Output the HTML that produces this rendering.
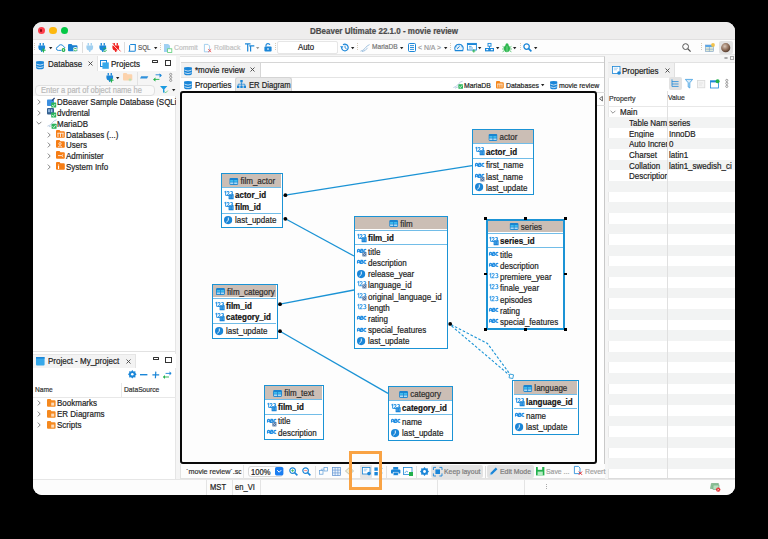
<!DOCTYPE html><html><head><meta charset="utf-8"><style>
html,body{margin:0;padding:0;}
body{width:768px;height:539px;background:#000;position:relative;overflow:hidden;font-family:"Liberation Sans", sans-serif;}
.r{position:absolute;box-sizing:border-box;}
.t{position:absolute;white-space:nowrap;line-height:1.2;-webkit-text-stroke:0.2px currentColor;}
svg.r{display:block;}
</style></head><body>
<div class="r" style="left:33.00px;top:22.00px;width:702.00px;height:473.20px;background:#ececec;border-radius:9px;overflow:hidden;"></div>
<div class="r" style="left:33.00px;top:22.00px;width:702.00px;height:17.50px;background:#eeeded;border-radius:9px 9px 0 0;"></div>
<div class="r" style="left:37.60px;top:26.80px;width:7.4px;height:7.4px;border-radius:50%;background:#fe3e4b;"></div>
<div class="r" style="left:49.40px;top:26.80px;width:7.4px;height:7.4px;border-radius:50%;background:#fdb80f;"></div>
<div class="r" style="left:61.10px;top:26.80px;width:7.4px;height:7.4px;border-radius:50%;background:#04c845;"></div>
<div class="r" style="left:40.1px;top:29.3px;width:2.4px;height:2.4px;border-radius:50%;background:#8a0a10;"></div>
<div class="t" style="left:310.00px;top:25.62px;font-size:8.80px;color:#4b4b4b;font-weight:bold;transform:scaleX(0.9091);transform-origin:0 50%;">DBeaver Ultimate 22.1.0 - movie review</div>
<div class="r" style="left:33.00px;top:39.30px;width:702.00px;height:15.50px;background:#fdfdfd;border-top:0.8px solid #e0dfdf;border-bottom:0.8px solid #e6e6e6;"></div>
<svg class="r" style="left:34.00px;top:43.00px;overflow:visible" width="1" height="9" viewBox="0 0 1 9"><rect x="0" y="0" width="1" height="1" fill="#d6cbb8"/><rect x="0" y="2" width="1" height="1" fill="#d6cbb8"/><rect x="0" y="4" width="1" height="1" fill="#d6cbb8"/><rect x="0" y="6" width="1" height="1" fill="#d6cbb8"/></svg>
<svg class="r" style="left:37.90px;top:42.60px;overflow:visible" width="9" height="10" viewBox="0 0 9 10"><rect x="1.6" y="0" width="1.3" height="2.6" fill="#1a86d8"/><rect x="4.6" y="0" width="1.3" height="2.6" fill="#1a86d8"/><path d="M0.4 2.4H7.1V5.1Q7.1 7.3 4.4 7.7V9H3.1V7.7Q0.4 7.3 0.4 5.1Z" fill="#1a86d8"/><path d="M5.5 5.2V9.4M3.4 7.3H7.6" stroke="#22b14c" stroke-width="1.1"/></svg>
<svg class="r" style="left:48.60px;top:46.50px;overflow:visible" width="3.4" height="2.4" viewBox="0 0 3.4 2.4"><path d="M0 0H3.4L1.7 2.3Z" fill="#222"/></svg>
<svg class="r" style="left:55.50px;top:44.00px;overflow:visible" width="10" height="8" viewBox="0 0 10 8"><path d="M5.4 6.4H2.3A1.8 1.8 0 0 1 2.1 2.8A2.9 2.9 0 0 1 7.6 2.6A1.9 1.9 0 0 1 9 4" stroke="#1a86d8" stroke-width="0.95" fill="none"/><circle cx="7.5" cy="6" r="1.9" fill="#22b14c"/><circle cx="7.5" cy="6" r="0.7" fill="#fff"/></svg>
<svg class="r" style="left:68.20px;top:43.60px;overflow:visible" width="9.5" height="7.2" viewBox="0 0 9.5 7.2"><path d="M0 1Q0 0 1 0H3.5L4.5 1.2H8.5Q9.5 1.2 9.5 2.2V6.4Q9.5 7.2 8.5 7.2H1Q0 7.2 0 6.2Z" fill="#1a7fd0"/><circle cx="7.3" cy="5.4" r="2.3" fill="#f8f8f8"/><path d="M5.6 5.6Q6.2 3.8 8.6 4.6M5.8 6.4Q7.2 7.6 9 6" stroke="#22b14c" stroke-width="0.8" fill="none"/></svg>
<div class="r" style="left:81.8px;top:42px;width:0.8px;height:11px;background:#dddddd"></div>
<svg class="r" style="left:85.60px;top:42.60px;overflow:visible" width="9" height="10" viewBox="0 0 9 10"><rect x="1.6" y="0" width="1.3" height="2.6" fill="#9fcff0"/><rect x="4.6" y="0" width="1.3" height="2.6" fill="#9fcff0"/><path d="M0.4 2.4H7.1V5.1Q7.1 7.3 4.4 7.7V9H3.1V7.7Q0.4 7.3 0.4 5.1Z" fill="#9fcff0"/></svg>
<svg class="r" style="left:99.20px;top:42.60px;overflow:visible" width="9" height="10" viewBox="0 0 9 10"><rect x="1.6" y="0" width="1.3" height="2.6" fill="#1a86d8"/><rect x="4.6" y="0" width="1.3" height="2.6" fill="#1a86d8"/><path d="M0.4 2.4H7.1V5.1Q7.1 7.3 4.4 7.7V9H3.1V7.7Q0.4 7.3 0.4 5.1Z" fill="#1a86d8"/><path d="M4.2 6.3Q5.2 4.8 7.3 5.3M4.6 8.2Q6.3 8.9 7.6 7.3" stroke="#22b14c" stroke-width="1" fill="none"/></svg>
<svg class="r" style="left:111.80px;top:42.60px;overflow:visible" width="9" height="10" viewBox="0 0 9 10"><rect x="1.6" y="0" width="1.3" height="2.6" fill="#f0201e"/><rect x="4.6" y="0" width="1.3" height="2.6" fill="#f0201e"/><path d="M0.4 2.4H7.1V5.1Q7.1 7.3 4.4 7.7V9H3.1V7.7Q0.4 7.3 0.4 5.1Z" fill="#f0201e"/><path d="M0 0.8L8 9" stroke="#fff" stroke-width="0.8"/><path d="M0.6 0L8.6 8.4" stroke="#f0201e" stroke-width="0.8"/></svg>
<div class="r" style="left:124px;top:42px;width:0.8px;height:11px;background:#dddddd"></div>
<svg class="r" style="left:128.10px;top:43.60px;overflow:visible" width="8" height="8" viewBox="0 0 8 8"><path d="M2.2 0.5H7.3V1.8M7.3 0.5V6.2Q7.3 7.3 6.2 7.3H0.5Q1.6 7.3 1.6 6.2V1.2" stroke="#1a86d8" stroke-width="1.1" fill="none"/></svg>
<div class="t" style="left:138.00px;top:42.85px;font-size:7.59px;color:#555;font-weight:normal;transform:scaleX(0.82);transform-origin:0 50%;">SQL</div>
<svg class="r" style="left:153.70px;top:46.50px;overflow:visible" width="3.4" height="2.4" viewBox="0 0 3.4 2.4"><path d="M0 0H3.4L1.7 2.3Z" fill="#222"/></svg>
<svg class="r" style="left:159.90px;top:43.00px;overflow:visible" width="1" height="9" viewBox="0 0 1 9"><rect x="0" y="0" width="1" height="1" fill="#d6cbb8"/><rect x="0" y="2" width="1" height="1" fill="#d6cbb8"/><rect x="0" y="4" width="1" height="1" fill="#d6cbb8"/><rect x="0" y="6" width="1" height="1" fill="#d6cbb8"/></svg>
<svg class="r" style="left:164.00px;top:43.60px;overflow:visible" width="8" height="8.5" viewBox="0 0 8 8.5"><path d="M0 0H4.2L6 1.8V8H0Z" fill="#9fd0f2"/><rect x="3.6" y="4.8" width="4.2" height="3.6" fill="#fff" stroke="#5ccf77" stroke-width="0.8"/></svg>
<div class="t" style="left:174.00px;top:42.85px;font-size:7.59px;color:#c2c2c2;font-weight:normal;transform:scaleX(0.9091);transform-origin:0 50%;">Commit</div>
<svg class="r" style="left:204.20px;top:43.60px;overflow:visible" width="8" height="8.5" viewBox="0 0 8 8.5"><path d="M0.4 0.4H4L5.6 2V7.8H0.4Z" stroke="#8fc4ea" stroke-width="0.8" fill="none"/><path d="M4.2 5.2L7.2 8M7.2 5.2L4.2 8" stroke="#f05252" stroke-width="0.9"/></svg>
<div class="t" style="left:213.50px;top:42.85px;font-size:7.59px;color:#c2c2c2;font-weight:normal;transform:scaleX(0.9091);transform-origin:0 50%;">Rollback</div>
<svg class="r" style="left:245.30px;top:43.30px;overflow:visible" width="10" height="9" viewBox="0 0 10 9"><path d="M0 0.8H5.5M2.7 0.8V8.6M4.2 2.8H9.3M5.6 2.8V8.6" stroke="#1a86d8" stroke-width="1.2" fill="none"/></svg>
<svg class="r" style="left:255.60px;top:46.50px;overflow:visible" width="3.4" height="2.4" viewBox="0 0 3.4 2.4"><path d="M0 0H3.4L1.7 2.3Z" fill="#999"/></svg>
<svg class="r" style="left:263.70px;top:43.00px;overflow:visible" width="8" height="8.5" viewBox="0 0 8 8.5"><path d="M2 3.6V2.4Q2 0.6 4 0.6Q5.5 0.6 5.9 1.8" stroke="#1a86d8" stroke-width="1.1" fill="none"/><rect x="0.4" y="3.6" width="7.2" height="4.8" rx="1" fill="#1a86d8"/><rect x="3.5" y="5" width="1" height="2" fill="#fff"/></svg>
<svg class="r" style="left:274.80px;top:43.00px;overflow:visible" width="1" height="9" viewBox="0 0 1 9"><rect x="0" y="0" width="1" height="1" fill="#d6cbb8"/><rect x="0" y="2" width="1" height="1" fill="#d6cbb8"/><rect x="0" y="4" width="1" height="1" fill="#d6cbb8"/><rect x="0" y="6" width="1" height="1" fill="#d6cbb8"/></svg>
<div class="r" style="left:277.30px;top:41.00px;width:60.40px;height:12.60px;background:#fff;border:0.8px solid #e6e6e6;border-radius:2px;"></div>
<div class="t" style="left:298.10px;top:42.25px;font-size:8.58px;color:#222;font-weight:normal;transform:scaleX(0.9091);transform-origin:0 50%;">Auto</div>
<svg class="r" style="left:339.50px;top:43.30px;overflow:visible" width="9" height="9" viewBox="0 0 9 9"><path d="M1.6 4.6A3.3 3.3 0 1 0 3 1.8" stroke="#1a86d8" stroke-width="1.2" fill="none"/><path d="M0 3.2L1.8 5.4L3.4 3.2Z" fill="#1a86d8"/><path d="M5 2.6V4.8L6.6 5.8" stroke="#1a86d8" stroke-width="0.9" fill="none"/></svg>
<svg class="r" style="left:350.60px;top:46.50px;overflow:visible" width="3.4" height="2.4" viewBox="0 0 3.4 2.4"><path d="M0 0H3.4L1.7 2.3Z" fill="#222"/></svg>
<svg class="r" style="left:357.00px;top:43.00px;overflow:visible" width="1" height="9" viewBox="0 0 1 9"><rect x="0" y="0" width="1" height="1" fill="#d6cbb8"/><rect x="0" y="2" width="1" height="1" fill="#d6cbb8"/><rect x="0" y="4" width="1" height="1" fill="#d6cbb8"/><rect x="0" y="6" width="1" height="1" fill="#d6cbb8"/></svg>
<svg class="r" style="left:360.00px;top:43.60px;overflow:visible" width="10" height="8" viewBox="0 0 10 8"><path d="M0.5 7.2Q3 6.8 5 4.4Q7 1.4 9.6 0.6M2 7.6Q5.6 7.2 7.6 3.8" stroke="#8bb4d8" stroke-width="0.8" fill="none"/></svg>
<div class="t" style="left:371.70px;top:43.04px;font-size:7.26px;color:#777;font-weight:normal;transform:scaleX(0.9091);transform-origin:0 50%;">MariaDB</div>
<svg class="r" style="left:400.30px;top:46.50px;overflow:visible" width="3.4" height="2.4" viewBox="0 0 3.4 2.4"><path d="M0 0H3.4L1.7 2.3Z" fill="#222"/></svg>
<svg class="r" style="left:408.00px;top:43.20px;overflow:visible" width="8" height="9" viewBox="0 0 8 9"><rect x="0.5" y="0.5" width="7" height="8" rx="1" stroke="#1a86d8" stroke-width="1" fill="none"/><path d="M2 2.6H6M2 4.5H6M2 6.4H6" stroke="#1a86d8" stroke-width="0.9"/></svg>
<div class="t" style="left:417.90px;top:42.85px;font-size:7.59px;color:#999;font-weight:normal;transform:scaleX(0.9091);transform-origin:0 50%;">&lt; N/A &gt;</div>
<svg class="r" style="left:444.10px;top:46.50px;overflow:visible" width="3.4" height="2.4" viewBox="0 0 3.4 2.4"><path d="M0 0H3.4L1.7 2.3Z" fill="#222"/></svg>
<svg class="r" style="left:450.40px;top:43.00px;overflow:visible" width="1" height="9" viewBox="0 0 1 9"><rect x="0" y="0" width="1" height="1" fill="#d6cbb8"/><rect x="0" y="2" width="1" height="1" fill="#d6cbb8"/><rect x="0" y="4" width="1" height="1" fill="#d6cbb8"/><rect x="0" y="6" width="1" height="1" fill="#d6cbb8"/></svg>
<svg class="r" style="left:454.20px;top:43.40px;overflow:visible" width="10" height="8.4" viewBox="0 0 10 8.4"><path d="M1.2 7.6A4.3 4.3 0 1 1 8.8 7.6Z" stroke="#1a86d8" stroke-width="1.1" fill="#eaf4fc"/><path d="M3 5.8L5.6 3.4" stroke="#1a86d8" stroke-width="1"/><path d="M2.2 3.6L2.8 4M5 1.8V2.6M7.8 3.6L7.2 4" stroke="#1a86d8" stroke-width="0.7"/></svg>
<svg class="r" style="left:466.50px;top:43.00px;overflow:visible" width="10" height="9.5" viewBox="0 0 10 9.5"><rect x="0.4" y="0.4" width="9" height="6.6" stroke="#1a86d8" stroke-width="0.9" fill="#fff"/><rect x="0.4" y="0.4" width="9" height="1.6" fill="#1a86d8"/><path d="M2 3.4H4.6M2 5H6" stroke="#1a86d8" stroke-width="0.7"/><path d="M6.8 6.4V9.6M5.2 8H8.4" stroke="#22b14c" stroke-width="0.9"/></svg>
<svg class="r" style="left:477.90px;top:46.50px;overflow:visible" width="3.4" height="2.4" viewBox="0 0 3.4 2.4"><path d="M0 0H3.4L1.7 2.3Z" fill="#222"/></svg>
<svg class="r" style="left:484.50px;top:43.30px;overflow:visible" width="9" height="8.5" viewBox="0 0 9 8.5"><rect x="3" y="0.4" width="3" height="2.8" stroke="#1a86d8" stroke-width="0.9" fill="none"/><path d="M4.5 3.2V5" stroke="#1a86d8" stroke-width="0.9"/><rect x="0" y="5" width="9" height="3.4" fill="#1a86d8"/><rect x="1.2" y="6" width="2" height="1.2" fill="#fff"/><rect x="5.8" y="6" width="2" height="1.2" fill="#fff"/></svg>
<svg class="r" style="left:495.80px;top:46.50px;overflow:visible" width="3.4" height="2.4" viewBox="0 0 3.4 2.4"><path d="M0 0H3.4L1.7 2.3Z" fill="#222"/></svg>
<svg class="r" style="left:502.00px;top:43.00px;overflow:visible" width="10" height="9.5" viewBox="0 0 10 9.5"><ellipse cx="5" cy="5.6" rx="3.1" ry="3.6" fill="#2eb84f"/><circle cx="5" cy="1.8" r="1.5" fill="#2eb84f"/><path d="M0.6 3.4L2 4.4M9.4 3.4L8 4.4M0.2 6H1.9M9.8 6H8.1M0.6 8.8L2 7.8M9.4 8.8L8 7.8" stroke="#2eb84f" stroke-width="0.8"/><path d="M5 3.2V9" stroke="#c8efd1" stroke-width="0.5"/></svg>
<svg class="r" style="left:513.30px;top:46.50px;overflow:visible" width="3.4" height="2.4" viewBox="0 0 3.4 2.4"><path d="M0 0H3.4L1.7 2.3Z" fill="#222"/></svg>
<svg class="r" style="left:519.60px;top:43.00px;overflow:visible" width="1" height="9" viewBox="0 0 1 9"><rect x="0" y="0" width="1" height="1" fill="#d6cbb8"/><rect x="0" y="2" width="1" height="1" fill="#d6cbb8"/><rect x="0" y="4" width="1" height="1" fill="#d6cbb8"/><rect x="0" y="6" width="1" height="1" fill="#d6cbb8"/></svg>
<svg class="r" style="left:523.20px;top:43.20px;overflow:visible" width="9" height="9" viewBox="0 0 9 9"><circle cx="3.6" cy="3.6" r="2.7" stroke="#1a86d8" stroke-width="1.3" fill="none"/><path d="M5.6 5.6L8.4 8.4" stroke="#1a86d8" stroke-width="1.6"/></svg>
<svg class="r" style="left:534.10px;top:46.50px;overflow:visible" width="3.4" height="2.4" viewBox="0 0 3.4 2.4"><path d="M0 0H3.4L1.7 2.3Z" fill="#222"/></svg>
<svg class="r" style="left:682.20px;top:42.50px;overflow:visible" width="9" height="9" viewBox="0 0 9 9"><circle cx="3.6" cy="3.6" r="2.9" stroke="#555" stroke-width="1" fill="none"/><path d="M5.8 5.8L8.6 8.6" stroke="#555" stroke-width="1.3"/></svg>
<svg class="r" style="left:701.00px;top:43.00px;overflow:visible" width="1" height="9" viewBox="0 0 1 9"><rect x="0" y="0" width="1" height="1" fill="#d6cbb8"/><rect x="0" y="2" width="1" height="1" fill="#d6cbb8"/><rect x="0" y="4" width="1" height="1" fill="#d6cbb8"/><rect x="0" y="6" width="1" height="1" fill="#d6cbb8"/></svg>
<svg class="r" style="left:704.70px;top:42.60px;overflow:visible" width="10" height="9" viewBox="0 0 10 9"><rect x="0.4" y="2" width="8" height="6.6" fill="#dfe9d8" stroke="#7aa0c8" stroke-width="0.6"/><rect x="0.4" y="2" width="8" height="2" fill="#5aa6e8"/><path d="M4.4 4V8.6M0.4 6.2H8.4" stroke="#7aa0c8" stroke-width="0.6"/><circle cx="8" cy="2" r="1.9" fill="#f3c24a"/></svg>
<div class="r" style="left:719.40px;top:40.70px;width:13.60px;height:13.00px;background:#e3e3e3;border-radius:2px;"></div>
<svg class="r" style="left:721.40px;top:42.60px;overflow:visible" width="9.4" height="9.4" viewBox="0 0 9.4 9.4"><defs><radialGradient id="av" cx="0.4" cy="0.35" r="0.7"><stop offset="0" stop-color="#d8c6b8"/><stop offset="0.6" stop-color="#8b6a55"/><stop offset="1" stop-color="#4a3426"/></radialGradient></defs><circle cx="4.7" cy="4.7" r="4.6" fill="url(#av)"/></svg>
<div class="r" style="left:33.00px;top:54.80px;width:702.00px;height:424.70px;background:#f5f5f5;"></div>
<div class="r" style="left:33.00px;top:55.60px;width:143.40px;height:295.40px;background:#fff;border-top:0.8px solid #e2e2e2;border-right:0.6px solid #e6e6e6;"></div>
<div class="r" style="left:33.00px;top:56.40px;width:143.00px;height:40.10px;background:#f5f5f5;"></div>
<div class="r" style="left:96.80px;top:56.00px;width:79.20px;height:14.80px;background:#fff;border-left:0.8px solid #e4e4e4;"></div>
<svg class="r" style="left:36.30px;top:59.70px;overflow:visible" width="8" height="9" viewBox="0 0 8 9"><ellipse cx="4.0" cy="2.5999999999999996" rx="3.8" ry="1.5" fill="#1a86d8"/><ellipse cx="4.0" cy="5.2" rx="3.8" ry="1.5" fill="#1a86d8"/><ellipse cx="4.0" cy="7.8" rx="3.8" ry="1.5" fill="#1a86d8"/><path d="M0.2 1.5V7.4Q4.0 9.8 7.8 7.4V1.5" fill="#1a86d8"/><path d="M0.6 4.2Q4.0 6 7.4 4.2M0.6 6.8Q4.0 8.6 7.4 6.8" stroke="#fff" stroke-width="0.7" fill="none"/></svg>
<div class="t" style="left:48.10px;top:58.92px;font-size:8.80px;color:#222;font-weight:normal;transform:scaleX(0.9091);transform-origin:0 50%;">Database</div>
<svg class="r" style="left:87.60px;top:61.40px;overflow:visible" width="5" height="5" viewBox="0 0 5 5"><path d="M0.5 0.5L4.5 4.5M4.5 0.5L0.5 4.5" stroke="#444" stroke-width="0.9"/></svg>
<svg class="r" style="left:100.20px;top:59.50px;overflow:visible" width="9" height="9" viewBox="0 0 9 9"><rect x="0.5" y="0.5" width="6" height="6" stroke="#1a86d8" stroke-width="1" fill="#fff"/><rect x="2.4" y="2.4" width="6.4" height="6.4" fill="#36a8ea"/></svg>
<div class="t" style="left:110.80px;top:58.92px;font-size:8.80px;color:#222;font-weight:normal;transform:scaleX(0.9091);transform-origin:0 50%;">Projects</div>
<div class="r" style="left:151.80px;top:60.30px;width:6.40px;height:2.50px;border:0.9px solid #333;border-radius:0.5px;"></div>
<div class="r" style="left:165.00px;top:60.00px;width:6.20px;height:6.20px;border:0.9px solid #333;border-top:1.8px solid #333;"></div>
<svg class="r" style="left:105.50px;top:72.60px;overflow:visible" width="9" height="10" viewBox="0 0 9 10"><rect x="1.6" y="0" width="1.3" height="2.6" fill="#1a86d8"/><rect x="4.6" y="0" width="1.3" height="2.6" fill="#1a86d8"/><path d="M0.4 2.4H7.1V5.1Q7.1 7.3 4.4 7.7V9H3.1V7.7Q0.4 7.3 0.4 5.1Z" fill="#1a86d8"/><path d="M5.5 5.2V9.4M3.4 7.3H7.6" stroke="#22b14c" stroke-width="1.1"/></svg>
<svg class="r" style="left:116.00px;top:76.60px;overflow:visible" width="3.4" height="2.4" viewBox="0 0 3.4 2.4"><path d="M0 0H3.4L1.7 2.3Z" fill="#222"/></svg>
<svg class="r" style="left:122.70px;top:73.00px;overflow:visible" width="9.3" height="7.6" viewBox="0 0 9.3 7.6"><path d="M0 1Q0 0 1 0H3.5L4.5 1.2H8.3Q9.3 1.2 9.3 2.2V6.8Q9.3 7.6 8.3 7.6H1Q0 7.6 0 6.6Z" fill="#fcd3ad"/><path d="M7 5.4V8.2M5.6 6.8H8.4" stroke="#a6e3b5" stroke-width="0.8"/></svg>
<div class="r" style="left:136.5px;top:71.5px;width:0.8px;height:13.0px;background:#e2e2e2"></div>
<svg class="r" style="left:140.40px;top:76.00px;overflow:visible" width="8.5" height="3" viewBox="0 0 8.5 3"><path d="M1.2 0.3H8.3L7 2.6H0Z" fill="#1a86d8" opacity="0.9"/></svg>
<svg class="r" style="left:152.50px;top:73.80px;overflow:visible" width="9" height="7" viewBox="0 0 9 7"><path d="M2.6 0.8H8.2M6.6 0L8.4 1.6L6.6 3" stroke="#1a86d8" stroke-width="0.9" fill="#1a86d8"/><path d="M0.8 5.4H6.4M2.4 4L0.6 5.6L2.4 7" stroke="#22b14c" stroke-width="0.9" fill="#22b14c"/></svg>
<svg class="r" style="left:169.00px;top:73.00px;overflow:visible" width="3.5" height="9" viewBox="0 0 3.5 9"><circle cx="1.7" cy="1.4" r="1.1" stroke="#666" stroke-width="0.6" fill="none"/><circle cx="1.7" cy="4.4" r="1.1" stroke="#666" stroke-width="0.6" fill="none"/><circle cx="1.7" cy="7.4" r="1.1" stroke="#666" stroke-width="0.6" fill="none"/></svg>
<div class="r" style="left:34.50px;top:85.20px;width:120.80px;height:10.60px;background:#fafafa;border:0.8px solid #e0e0e0;border-radius:4px;"></div>
<div class="t" style="left:40.80px;top:86.25px;font-size:8.25px;color:#b9b9b9;font-weight:normal;transform:scaleX(0.9091);transform-origin:0 50%;">Enter a part of object name he</div>
<svg class="r" style="left:160.30px;top:86.30px;overflow:visible" width="8" height="7.4" viewBox="0 0 8 7.4"><path d="M0 0H7.4L4.4 3.2V7.2L3 6.2V3.2Z" fill="#1a9ae0"/><path d="M4.6 5.6L5.8 6.8L7.8 4.6" stroke="#3cc05c" stroke-width="0.7" fill="none"/></svg>
<svg class="r" style="left:171.70px;top:88.90px;overflow:visible" width="3.4" height="2.4" viewBox="0 0 3.4 2.4"><path d="M0 0H3.4L1.7 2.3Z" fill="#222"/></svg>
<svg class="r" style="left:37.20px;top:99.30px;overflow:visible" width="4" height="6" viewBox="0 0 4 6"><path d="M0.8 0.6L3.2 3L0.8 5.4" stroke="#777" stroke-width="0.9" fill="none"/></svg>
<svg class="r" style="left:37.20px;top:110.00px;overflow:visible" width="4" height="6" viewBox="0 0 4 6"><path d="M0.8 0.6L3.2 3L0.8 5.4" stroke="#777" stroke-width="0.9" fill="none"/></svg>
<svg class="r" style="left:36.20px;top:121.40px;overflow:visible" width="6" height="4" viewBox="0 0 6 4"><path d="M0.6 0.8L3 3.2L5.4 0.8" stroke="#777" stroke-width="0.9" fill="none"/></svg>
<svg class="r" style="left:47.20px;top:97.60px;overflow:visible" width="10" height="10" viewBox="0 0 10 10"><rect x="0" y="1.6" width="7" height="6.4" rx="0.8" fill="#3b8fe0"/><path d="M5 2.6L7.6 0" stroke="#1d3f74" stroke-width="1.2"/><rect x="4.2" y="4.6" width="5" height="5" rx="0.5" fill="#2cb45a"/><path d="M5.2 7.2L6.4 8.4L8.2 6" stroke="#fff" stroke-width="0.8" fill="none"/></svg>
<div class="t" style="left:56.7px;top:97.32px;width:131.23px;overflow:hidden;font-size:8.80px;color:#1e1e1e;transform:scaleX(0.9091);transform-origin:0 50%;">DBeaver Sample Database (SQLite)</div>
<svg class="r" style="left:47.20px;top:108.30px;overflow:visible" width="10" height="10" viewBox="0 0 10 10"><rect x="0" y="0" width="7" height="6.6" rx="1" fill="#34608f"/><rect x="1.2" y="1.2" width="1.6" height="3" fill="#9ec3ea"/><rect x="3.8" y="1.2" width="1.6" height="3" fill="#9ec3ea"/><rect x="4.2" y="4.6" width="5" height="5" rx="0.5" fill="#2cb45a"/><path d="M5.2 7.2L6.4 8.4L8.2 6" stroke="#fff" stroke-width="0.8" fill="none"/></svg>
<div class="t" style="left:56.70px;top:108.32px;font-size:8.80px;color:#1e1e1e;font-weight:normal;transform:scaleX(0.9091);transform-origin:0 50%;">dvdrental</div>
<svg class="r" style="left:46.60px;top:118.60px;overflow:visible" width="10.4" height="10" viewBox="0 0 10.4 10"><path d="M0.4 7.2Q3.6 6.6 5.6 3.4Q7 1.4 9.6 0.8M2 7.8Q5 7.2 6.8 4.6" stroke="#a0bcd8" stroke-width="0.7" fill="none"/><rect x="4.6" y="4.8" width="5" height="5" rx="0.5" fill="#2cb45a"/><path d="M5.6 7.4L6.8 8.6L8.6 6.2" stroke="#fff" stroke-width="0.8" fill="none"/></svg>
<div class="t" style="left:56.70px;top:119.02px;font-size:8.80px;color:#1e1e1e;font-weight:normal;transform:scaleX(0.9091);transform-origin:0 50%;">MariaDB</div>
<svg class="r" style="left:47.30px;top:131.70px;overflow:visible" width="4" height="6" viewBox="0 0 4 6"><path d="M0.8 0.6L3.2 3L0.8 5.4" stroke="#777" stroke-width="0.9" fill="none"/></svg>
<svg class="r" style="left:56.10px;top:129.80px;overflow:visible" width="8.8" height="7.8" viewBox="0 0 8.8 7.8"><path d="M0 1Q0 0 1 0H3.5L4.5 1.2H7.800000000000001Q8.8 1.2 8.8 2.2V7.0Q8.8 7.8 7.800000000000001 7.8H1Q0 7.8 0 6.8Z" fill="#f67d14"/><path d="M2 3.2V7M4.5 3.2V7M7 3.2V7" stroke="#fff" stroke-width="0.8"/><path d="M1.4 3.2H7.6" stroke="#fff" stroke-width="0.8"/></svg>
<div class="t" style="left:65.50px;top:129.72px;font-size:8.80px;color:#1e1e1e;font-weight:normal;transform:scaleX(0.9091);transform-origin:0 50%;">Databases (...)</div>
<svg class="r" style="left:47.30px;top:142.30px;overflow:visible" width="4" height="6" viewBox="0 0 4 6"><path d="M0.8 0.6L3.2 3L0.8 5.4" stroke="#777" stroke-width="0.9" fill="none"/></svg>
<svg class="r" style="left:56.10px;top:140.40px;overflow:visible" width="8.8" height="7.8" viewBox="0 0 8.8 7.8"><path d="M0 1Q0 0 1 0H3.5L4.5 1.2H7.800000000000001Q8.8 1.2 8.8 2.2V7.0Q8.8 7.8 7.800000000000001 7.8H1Q0 7.8 0 6.8Z" fill="#f67d14"/><circle cx="4" cy="3.8" r="1.2" stroke="#fff" stroke-width="0.7" fill="none"/><path d="M2 7Q4 4.6 6 7" stroke="#fff" stroke-width="0.7" fill="none"/></svg>
<div class="t" style="left:65.50px;top:140.32px;font-size:8.80px;color:#1e1e1e;font-weight:normal;transform:scaleX(0.9091);transform-origin:0 50%;">Users</div>
<svg class="r" style="left:47.30px;top:152.90px;overflow:visible" width="4" height="6" viewBox="0 0 4 6"><path d="M0.8 0.6L3.2 3L0.8 5.4" stroke="#777" stroke-width="0.9" fill="none"/></svg>
<svg class="r" style="left:56.10px;top:151.00px;overflow:visible" width="8.8" height="7.8" viewBox="0 0 8.8 7.8"><path d="M0 1Q0 0 1 0H3.5L4.5 1.2H7.800000000000001Q8.8 1.2 8.8 2.2V7.0Q8.8 7.8 7.800000000000001 7.8H1Q0 7.8 0 6.8Z" fill="#f67d14"/><path d="M2 4.6H5.6M5.6 4.6L7.2 3.4M5.6 4.6L7.2 5.8" stroke="#fff" stroke-width="0.8" fill="none"/></svg>
<div class="t" style="left:65.50px;top:150.92px;font-size:8.80px;color:#1e1e1e;font-weight:normal;transform:scaleX(0.9091);transform-origin:0 50%;">Administer</div>
<svg class="r" style="left:47.30px;top:163.50px;overflow:visible" width="4" height="6" viewBox="0 0 4 6"><path d="M0.8 0.6L3.2 3L0.8 5.4" stroke="#777" stroke-width="0.9" fill="none"/></svg>
<svg class="r" style="left:56.10px;top:161.60px;overflow:visible" width="8.8" height="7.8" viewBox="0 0 8.8 7.8"><path d="M0 1Q0 0 1 0H3.5L4.5 1.2H7.800000000000001Q8.8 1.2 8.8 2.2V7.0Q8.8 7.8 7.800000000000001 7.8H1Q0 7.8 0 6.8Z" fill="#f67d14"/><rect x="2" y="2.6" width="1.1" height="0.9" fill="#fff"/><rect x="2" y="4" width="1.1" height="3" fill="#fff"/></svg>
<div class="t" style="left:65.50px;top:161.52px;font-size:8.80px;color:#1e1e1e;font-weight:normal;transform:scaleX(0.9091);transform-origin:0 50%;">System Info</div>
<div class="r" style="left:33.00px;top:350.80px;width:143.40px;height:128.70px;background:#fff;border-top:0.8px solid #e2e2e2;border-right:0.6px solid #e6e6e6;"></div>
<div class="r" style="left:33.00px;top:353.80px;width:143.00px;height:14.40px;background:#f3f3f3;border-top:0.8px solid #e6e6e6;"></div>
<div class="r" style="left:134.60px;top:354.20px;width:41.40px;height:13.80px;background:#fff;border-left:0.8px solid #e4e4e4;"></div>
<svg class="r" style="left:36.20px;top:356.50px;overflow:visible" width="8.6" height="8.4" viewBox="0 0 8.6 8.4"><rect x="0" y="0" width="8.6" height="8.4" rx="1" fill="#36a8ea"/><rect x="0" y="0" width="8.6" height="1.6" fill="#1a86d8"/></svg>
<div class="t" style="left:47.70px;top:356.32px;font-size:8.80px;color:#222;font-weight:normal;transform:scaleX(0.9091);transform-origin:0 50%;">Project - My_project</div>
<svg class="r" style="left:125.60px;top:358.60px;overflow:visible" width="5" height="5" viewBox="0 0 5 5"><path d="M0.5 0.5L4.5 4.5M4.5 0.5L0.5 4.5" stroke="#444" stroke-width="0.9"/></svg>
<div class="r" style="left:152.60px;top:357.40px;width:6.20px;height:2.20px;border:0.9px solid #333;border-radius:0.5px;"></div>
<div class="r" style="left:165.40px;top:357.20px;width:6.20px;height:6.20px;border:0.9px solid #333;border-top:1.8px solid #333;"></div>
<svg class="r" style="left:127.80px;top:370.20px;overflow:visible" width="8.6" height="8.6" viewBox="0 0 8.6 8.6"><path d="M4.3 0L5.5 1.4L7.4 1.2L7.4 3.1L8.6 4.3L7.4 5.5L7.4 7.4L5.5 7.2L4.3 8.6L3.1 7.2L1.2 7.4L1.2 5.5L0 4.3L1.2 3.1L1.2 1.2L3.1 1.4Z" fill="#1a86d8"/><circle cx="4.3" cy="4.3" r="1.3" fill="#fff"/></svg>
<svg class="r" style="left:139.80px;top:373.60px;overflow:visible" width="7.4" height="2" viewBox="0 0 7.4 2"><rect x="0" y="0" width="7.4" height="1.4" fill="#1a86d8"/></svg>
<svg class="r" style="left:151.60px;top:370.60px;overflow:visible" width="7.6" height="7.6" viewBox="0 0 7.6 7.6"><path d="M3.8 0.6L3.4 7.2M0.4 3.8H7.2" stroke="#1a86d8" stroke-width="1.2"/></svg>
<svg class="r" style="left:163.00px;top:371.60px;overflow:visible" width="8.6" height="6.4" viewBox="0 0 8.6 6.4"><path d="M2.6 1.4H8M6.6 0L8.2 1.4L6.6 2.8" stroke="#1a86d8" stroke-width="0.9" fill="#1a86d8"/><path d="M0.6 5H6M2 3.6L0.4 5L2 6.4" stroke="#22b14c" stroke-width="0.9" fill="#22b14c"/></svg>
<div class="t" style="left:35.20px;top:385.94px;font-size:7.26px;color:#333;font-weight:normal;transform:scaleX(0.9091);transform-origin:0 50%;">Name</div>
<div class="t" style="left:123.70px;top:385.88px;font-size:7.37px;color:#333;font-weight:normal;transform:scaleX(0.9091);transform-origin:0 50%;">DataSource</div>
<div class="r" style="left:33.00px;top:396.80px;width:143.00px;height:0.80px;background:#e8e8e8;"></div>
<div class="r" style="left:121.40px;top:382.50px;width:0.70px;height:14.30px;background:#e8e8e8;"></div>
<svg class="r" style="left:37.20px;top:400.30px;overflow:visible" width="4" height="6" viewBox="0 0 4 6"><path d="M0.8 0.6L3.2 3L0.8 5.4" stroke="#777" stroke-width="0.9" fill="none"/></svg>
<svg class="r" style="left:46.60px;top:399.10px;overflow:visible" width="8.6" height="7.8" viewBox="0 0 8.6 7.8"><path d="M0 1Q0 0 1 0H3.5L4.5 1.2H7.6Q8.6 1.2 8.6 2.2V7.0Q8.6 7.8 7.6 7.8H1Q0 7.8 0 6.8Z" fill="#f5891f"/><rect x="4.2" y="3.6" width="3" height="3" fill="#fff" opacity="0.7"/></svg>
<div class="t" style="left:56.70px;top:398.42px;font-size:8.80px;color:#1e1e1e;font-weight:normal;transform:scaleX(0.9091);transform-origin:0 50%;">Bookmarks</div>
<svg class="r" style="left:37.20px;top:411.20px;overflow:visible" width="4" height="6" viewBox="0 0 4 6"><path d="M0.8 0.6L3.2 3L0.8 5.4" stroke="#777" stroke-width="0.9" fill="none"/></svg>
<svg class="r" style="left:46.60px;top:410.00px;overflow:visible" width="8.6" height="7.8" viewBox="0 0 8.6 7.8"><path d="M0 1Q0 0 1 0H3.5L4.5 1.2H7.6Q8.6 1.2 8.6 2.2V7.0Q8.6 7.8 7.6 7.8H1Q0 7.8 0 6.8Z" fill="#f5891f"/><rect x="4.2" y="3.6" width="3" height="3" fill="#fff" opacity="0.7"/></svg>
<div class="t" style="left:56.70px;top:409.32px;font-size:8.80px;color:#1e1e1e;font-weight:normal;transform:scaleX(0.9091);transform-origin:0 50%;">ER Diagrams</div>
<svg class="r" style="left:37.20px;top:422.00px;overflow:visible" width="4" height="6" viewBox="0 0 4 6"><path d="M0.8 0.6L3.2 3L0.8 5.4" stroke="#777" stroke-width="0.9" fill="none"/></svg>
<svg class="r" style="left:46.60px;top:420.80px;overflow:visible" width="8.6" height="7.8" viewBox="0 0 8.6 7.8"><path d="M0 1Q0 0 1 0H3.5L4.5 1.2H7.6Q8.6 1.2 8.6 2.2V7.0Q8.6 7.8 7.6 7.8H1Q0 7.8 0 6.8Z" fill="#f5891f"/><rect x="4.2" y="3.6" width="3" height="3" fill="#fff" opacity="0.7"/></svg>
<div class="t" style="left:56.70px;top:420.12px;font-size:8.80px;color:#1e1e1e;font-weight:normal;transform:scaleX(0.9091);transform-origin:0 50%;">Scripts</div>
<div class="r" style="left:180.00px;top:55.80px;width:425.20px;height:423.70px;background:#fff;border-top:0.8px solid #e2e2e2;border-right:0.8px solid #c9c9c9;"></div>
<div class="r" style="left:180.50px;top:62.20px;width:423.90px;height:0.80px;background:#d6d6d6;"></div>
<div class="r" style="left:180.50px;top:62.40px;width:80.00px;height:14.80px;background:#f2f2f2;border-top:0.8px solid #d6d6d6;border-right:0.8px solid #d6d6d6;"></div>
<svg class="r" style="left:183.80px;top:65.50px;overflow:visible" width="8" height="9" viewBox="0 0 8 9"><ellipse cx="4.0" cy="2.5999999999999996" rx="3.8" ry="1.5" fill="#1a86d8"/><ellipse cx="4.0" cy="5.2" rx="3.8" ry="1.5" fill="#1a86d8"/><ellipse cx="4.0" cy="7.8" rx="3.8" ry="1.5" fill="#1a86d8"/><path d="M0.2 1.5V7.4Q4.0 9.8 7.8 7.4V1.5" fill="#1a86d8"/><path d="M0.6 4.2Q4.0 6 7.4 4.2M0.6 6.8Q4.0 8.6 7.4 6.8" stroke="#fff" stroke-width="0.7" fill="none"/></svg>
<div class="t" style="left:194.80px;top:65.12px;font-size:8.80px;color:#222;font-weight:normal;transform:scaleX(0.9091);transform-origin:0 50%;">*movie review</div>
<svg class="r" style="left:250.20px;top:67.40px;overflow:visible" width="5" height="5" viewBox="0 0 5 5"><path d="M0.5 0.5L4.5 4.5M4.5 0.5L0.5 4.5" stroke="#444" stroke-width="0.9"/></svg>
<div class="r" style="left:180.50px;top:77.20px;width:423.50px;height:0.60px;background:#e4e4e4;"></div>
<div class="r" style="left:234.50px;top:77.40px;width:57.30px;height:14.60px;background:#e8e8e8;border:0.8px solid #d4d4d4;border-bottom:none;border-radius:3px 3px 0 0;"></div>
<svg class="r" style="left:183.80px;top:80.20px;overflow:visible" width="8" height="9" viewBox="0 0 8 9"><ellipse cx="4.0" cy="2.5999999999999996" rx="3.8" ry="1.5" fill="#1a86d8"/><ellipse cx="4.0" cy="5.2" rx="3.8" ry="1.5" fill="#1a86d8"/><ellipse cx="4.0" cy="7.8" rx="3.8" ry="1.5" fill="#1a86d8"/><path d="M0.2 1.5V7.4Q4.0 9.8 7.8 7.4V1.5" fill="#1a86d8"/><path d="M0.6 4.2Q4.0 6 7.4 4.2M0.6 6.8Q4.0 8.6 7.4 6.8" stroke="#fff" stroke-width="0.7" fill="none"/></svg>
<div class="t" style="left:194.80px;top:79.82px;font-size:8.80px;color:#222;font-weight:normal;transform:scaleX(0.9091);transform-origin:0 50%;">Properties</div>
<svg class="r" style="left:237.20px;top:79.60px;overflow:visible" width="9" height="9" viewBox="0 0 9 9"><rect x="3.3" y="0" width="2.4" height="2.4" fill="#1a86d8"/><path d="M4.5 2.4V4.2M1.2 4.2H7.8M1.2 4.2V5.6M7.8 4.2V5.6M4.5 4.2V5.6" stroke="#1a86d8" stroke-width="0.8"/><rect x="0" y="5.6" width="2.4" height="2.4" fill="#1a86d8"/><rect x="3.3" y="5.6" width="2.4" height="2.4" fill="#1a86d8"/><rect x="6.6" y="5.6" width="2.4" height="2.4" fill="#1a86d8"/></svg>
<div class="t" style="left:248.50px;top:80.05px;font-size:8.42px;color:#222;font-weight:normal;transform:scaleX(0.9091);transform-origin:0 50%;">ER Diagram</div>
<svg class="r" style="left:452.90px;top:80.20px;overflow:visible" width="11" height="9" viewBox="0 0 11 9"><path d="M0.4 7.6Q3.6 7 5.6 3.8Q7 1.8 9.6 1.2M2 8.2Q5 7.6 6.8 5" stroke="#a0bcd8" stroke-width="0.7" fill="none"/><rect x="5.4" y="4.2" width="4.6" height="4.6" rx="0.5" fill="#2cb45a"/><path d="M6.3 6.6L7.4 7.6L9.1 5.4" stroke="#fff" stroke-width="0.8" fill="none"/></svg>
<div class="t" style="left:464.00px;top:80.75px;font-size:7.59px;color:#222;font-weight:normal;transform:scaleX(0.9091);transform-origin:0 50%;">MariaDB</div>
<svg class="r" style="left:496.30px;top:80.80px;overflow:visible" width="7.8" height="7.4" viewBox="0 0 7.8 7.4"><path d="M0 1Q0 0 1 0H3.5L4.5 1.2H6.8Q7.8 1.2 7.8 2.2V6.6000000000000005Q7.8 7.4 6.8 7.4H1Q0 7.4 0 6.4Z" fill="#f5891f"/><path d="M1.8 3V6.6M3.9 3V6.6M6 3V6.6M1.2 3H6.6" stroke="#fff" stroke-width="0.7"/></svg>
<div class="t" style="left:505.50px;top:80.75px;font-size:7.59px;color:#222;font-weight:normal;transform:scaleX(0.9091);transform-origin:0 50%;">Databases</div>
<svg class="r" style="left:541.30px;top:83.90px;overflow:visible" width="3.4" height="2.4" viewBox="0 0 3.4 2.4"><path d="M0 0H3.4L1.7 2.3Z" fill="#222"/></svg>
<svg class="r" style="left:549.60px;top:80.40px;overflow:visible" width="7.4" height="8.6" viewBox="0 0 7.4 8.6"><ellipse cx="3.7" cy="2.5999999999999996" rx="3.5" ry="1.5" fill="#1a86d8"/><ellipse cx="3.7" cy="5.2" rx="3.5" ry="1.5" fill="#1a86d8"/><ellipse cx="3.7" cy="7.8" rx="3.5" ry="1.5" fill="#1a86d8"/><path d="M0.2 1.5V7.0Q3.7 9.4 7.2 7.0V1.5" fill="#1a86d8"/><path d="M0.6 4.2Q3.7 6 6.800000000000001 4.2M0.6 6.8Q3.7 8.6 6.800000000000001 6.8" stroke="#fff" stroke-width="0.7" fill="none"/></svg>
<div class="t" style="left:559.20px;top:80.75px;font-size:7.59px;color:#222;font-weight:normal;transform:scaleX(0.9091);transform-origin:0 50%;">movie review</div>
<div class="r" style="left:180.30px;top:91.00px;width:416.70px;height:372.60px;background:#fdfdfd;border:2.05px solid #0a0a0a;border-radius:3px;"></div>
<div class="r" style="left:597.20px;top:91.50px;width:7.80px;height:14.00px;border-top:0.6px solid #dcdcdc;border-bottom:0.6px solid #dcdcdc;"></div>
<svg class="r" style="left:599.00px;top:95.80px;overflow:visible" width="4" height="5.4" viewBox="0 0 4 5.4"><path d="M3.4 0.4V5L0.5 2.7Z" stroke="#444" stroke-width="0.8" fill="none"/></svg>
<div class="r" style="left:180.00px;top:463.60px;width:424.50px;height:15.60px;background:#fdfdfd;border-left:0.7px solid #e2e2e2;border-bottom:0.7px solid #e2e2e2;"></div>
<div class="t" style="left:186px;top:466.65px;width:61.05px;overflow:hidden;font-size:7.92px;color:#333;transform:scaleX(0.9091);transform-origin:0 50%;">`movie review`.sc</div>
<div class="r" style="left:242.50px;top:464.50px;width:0.70px;height:14.00px;background:#e6e6e6;"></div>
<div class="r" style="left:248.40px;top:465.60px;width:34.60px;height:11.40px;background:#fff;border:0.8px solid #dadada;border-radius:3px;"></div>
<div class="t" style="left:251.00px;top:467.08px;font-size:8.36px;color:#222;font-weight:normal;transform:scaleX(0.9091);transform-origin:0 50%;">100%</div>
<svg class="r" style="left:274.60px;top:466.90px;overflow:visible" width="8.4" height="8.4" viewBox="0 0 8.4 8.4"><rect x="0" y="0" width="8.4" height="8.4" rx="1.6" fill="#1b7ef2"/><path d="M2.2 3.2L4.2 5.2L6.2 3.2" stroke="#fff" stroke-width="1" fill="none"/></svg>
<svg class="r" style="left:289.30px;top:466.80px;overflow:visible" width="9" height="9" viewBox="0 0 9 9"><circle cx="3.6" cy="3.6" r="2.8" stroke="#1a86d8" stroke-width="1.2" fill="none"/><path d="M5.6 5.6L8.4 8.4" stroke="#1a86d8" stroke-width="1.5"/><path d="M2.2 3.6H5M3.6 2.2V5" stroke="#22b14c" stroke-width="0.7"/></svg>
<svg class="r" style="left:302.40px;top:466.80px;overflow:visible" width="9" height="9" viewBox="0 0 9 9"><circle cx="3.6" cy="3.6" r="2.8" stroke="#1a86d8" stroke-width="1.2" fill="none"/><path d="M5.6 5.6L8.4 8.4" stroke="#1a86d8" stroke-width="1.5"/><path d="M2.2 3.6H5" stroke="#f05252" stroke-width="0.7"/></svg>
<div class="r" style="left:315px;top:465.5px;width:0.8px;height:12.0px;background:#e2e2e2"></div>
<svg class="r" style="left:319.00px;top:467.00px;overflow:visible" width="9" height="8" viewBox="0 0 9 8"><rect x="0.4" y="3.6" width="3.6" height="3.6" stroke="#5a9ad6" stroke-width="0.7" fill="none"/><rect x="5" y="0.4" width="3.6" height="3.6" stroke="#5a9ad6" stroke-width="0.7" fill="none"/><path d="M2.2 3.6V2.2H5" stroke="#5a9ad6" stroke-width="0.6" fill="none"/></svg>
<svg class="r" style="left:331.80px;top:466.60px;overflow:visible" width="9" height="9" viewBox="0 0 9 9"><rect x="0.4" y="0.4" width="8.2" height="8.2" stroke="#5a8fd0" stroke-width="0.7" fill="#e9f2fb"/><path d="M3.1 0.4V8.6M5.9 0.4V8.6M0.4 3.1H8.6M0.4 5.9H8.6" stroke="#5a8fd0" stroke-width="0.6"/></svg>
<svg class="r" style="left:345.00px;top:467.00px;overflow:visible" width="9" height="8" viewBox="0 0 9 8"><path d="M4.5 0.4L8.6 4L4.5 7.6L0.4 4Z" stroke="#b7b7a4" stroke-width="0.8" fill="#efefd8"/></svg>
<div class="r" style="left:360.00px;top:464.60px;width:12.20px;height:13.40px;background:#e4e4e4;border-radius:1px;"></div>
<svg class="r" style="left:361.60px;top:466.80px;overflow:visible" width="9" height="9" viewBox="0 0 9 9"><rect x="0.4" y="0.4" width="7.6" height="6.6" stroke="#1a86d8" stroke-width="0.8" fill="#fff"/><path d="M1.8 2.2H5.4M1.8 3.8H4.4" stroke="#7ab6e6" stroke-width="0.7"/><circle cx="7" cy="6.6" r="1.8" fill="#1a86d8"/></svg>
<svg class="r" style="left:374.00px;top:466.80px;overflow:visible" width="9" height="9" viewBox="0 0 9 9"><rect x="0.4" y="0.4" width="3.4" height="3.4" fill="#1a86d8"/><rect x="0.4" y="5" width="3.4" height="3.4" fill="#1a86d8"/><path d="M5 1.4H8.6M5 2.8H7.6M5 6H8.6M5 7.4H7.6" stroke="#1a86d8" stroke-width="0.6"/></svg>
<div class="r" style="left:386px;top:465.5px;width:0.8px;height:12.0px;background:#e2e2e2"></div>
<svg class="r" style="left:390.80px;top:466.80px;overflow:visible" width="9.4" height="8.6" viewBox="0 0 9.4 8.6"><rect x="2.2" y="0" width="5" height="2.6" fill="#1a86d8"/><rect x="0" y="2.4" width="9.4" height="4.2" rx="1.2" fill="#1a86d8"/><rect x="2.2" y="5.2" width="5" height="3.2" fill="#1a86d8" stroke="#fff" stroke-width="0.5"/></svg>
<svg class="r" style="left:402.80px;top:466.80px;overflow:visible" width="10" height="9" viewBox="0 0 10 9"><rect x="0.4" y="0.4" width="8.6" height="7" stroke="#1a86d8" stroke-width="0.8" fill="#fff"/><path d="M1.6 6.2L3.6 4L5 5.2" stroke="#1a86d8" stroke-width="0.7" fill="none"/><rect x="6" y="5" width="4" height="4" fill="#22b14c"/></svg>
<div class="r" style="left:415.5px;top:465.5px;width:0.8px;height:12.0px;background:#e2e2e2"></div>
<svg class="r" style="left:419.60px;top:466.80px;overflow:visible" width="9" height="9" viewBox="0 0 9 9"><path d="M4.5 0L5.8 1.5L7.8 1.2L7.8 3.2L9 4.5L7.8 5.8L7.8 7.8L5.8 7.5L4.5 9L3.2 7.5L1.2 7.8L1.2 5.8L0 4.5L1.2 3.2L1.2 1.2L3.2 1.5Z" fill="#1a86d8"/><circle cx="4.5" cy="4.5" r="1.4" fill="#fff"/></svg>
<div class="r" style="left:431.40px;top:464.80px;width:52.00px;height:13.20px;background:#e3e3e3;border-radius:2px;"></div>
<svg class="r" style="left:432.80px;top:466.80px;overflow:visible" width="9.4" height="9.4" viewBox="0 0 9.4 9.4"><path d="M0.4 3V0.4H3M6.4 0.4H9V3M9 6.4V9H6.4M3 9H0.4V6.4" stroke="#1a86d8" stroke-width="0.9" fill="none"/><rect x="2.4" y="2.4" width="4.6" height="4.6" fill="#1a86d8"/></svg>
<div class="t" style="left:443.90px;top:466.95px;font-size:7.59px;color:#7b7b7b;font-weight:normal;transform:scaleX(0.9091);transform-origin:0 50%;">Keep layout</div>
<div class="r" style="left:485.2px;top:465.5px;width:0.8px;height:12.0px;background:#dcdcdc"></div>
<div class="r" style="left:487.30px;top:464.80px;width:46.40px;height:13.20px;background:#e3e3e3;border-radius:2px;"></div>
<svg class="r" style="left:489.00px;top:466.60px;overflow:visible" width="9" height="9" viewBox="0 0 9 9"><path d="M0.8 8.2L1.4 6L6.8 0.6L8.4 2.2L3 7.6Z" fill="#1a86d8"/><path d="M0.8 8.2L1.4 6L3 7.6Z" fill="#9ccff4"/></svg>
<div class="t" style="left:499.80px;top:466.95px;font-size:7.59px;color:#7b7b7b;font-weight:normal;transform:scaleX(0.9091);transform-origin:0 50%;">Edit Mode</div>
<svg class="r" style="left:536.20px;top:466.80px;overflow:visible" width="8.4" height="8.4" viewBox="0 0 8.4 8.4"><rect x="0" y="0" width="8.4" height="8.4" fill="#22b14c"/><rect x="1.8" y="0" width="4.4" height="2.8" fill="#fff"/><rect x="1.6" y="4.6" width="5.2" height="3.8" fill="#b8ecc6"/></svg>
<div class="t" style="left:546.00px;top:466.95px;font-size:7.59px;color:#a0a0a0;font-weight:normal;transform:scaleX(0.9091);transform-origin:0 50%;">Save ...</div>
<svg class="r" style="left:574.00px;top:466.40px;overflow:visible" width="9" height="9.6" viewBox="0 0 9 9.6"><path d="M0.4 0.4H4.4L6 2V7.6H0.4Z" stroke="#1a86d8" stroke-width="0.8" fill="#fff"/><path d="M4.8 5.6L8 8.8M8 5.6L4.8 8.8" stroke="#e4262a" stroke-width="1"/></svg>
<div class="t" style="left:585px;top:466.95px;width:22.55px;overflow:hidden;font-size:7.59px;color:#a0a0a0;transform:scaleX(0.9091);transform-origin:0 50%;">Revert</div>
<div class="r" style="left:607.60px;top:62.20px;width:127.40px;height:417.30px;background:#fff;border-top:0.8px solid #e2e2e2;border-left:0.6px solid #e8e8e8;"></div>
<div class="r" style="left:608.20px;top:62.80px;width:66.50px;height:15.20px;background:#f0f0f0;border-right:0.8px solid #e0e0e0;"></div>
<svg class="r" style="left:611.60px;top:66.00px;overflow:visible" width="9" height="8.6" viewBox="0 0 9 8.6"><rect x="0.4" y="0.4" width="7.6" height="7" stroke="#1a86d8" stroke-width="0.8" fill="#fff"/><path d="M1.8 2.2H6M1.8 3.8H5" stroke="#8cc2ec" stroke-width="0.7"/><circle cx="7" cy="7" r="1.8" fill="#1a86d8"/></svg>
<div class="t" style="left:622.20px;top:65.62px;font-size:8.80px;color:#222;font-weight:normal;transform:scaleX(0.9091);transform-origin:0 50%;">Properties</div>
<svg class="r" style="left:664.60px;top:68.00px;overflow:visible" width="5" height="5" viewBox="0 0 5 5"><path d="M0.5 0.5L4.5 4.5M4.5 0.5L0.5 4.5" stroke="#444" stroke-width="0.9"/></svg>
<div class="r" style="left:724.00px;top:57.00px;width:3.60px;height:2.00px;border:0.6px solid #aaa;border-radius:1px;"></div>
<div class="r" style="left:730.00px;top:56.40px;width:4.00px;height:3.60px;border:0.6px solid #aaa;"></div>
<div class="r" style="left:669.30px;top:77.10px;width:12.40px;height:12.80px;background:#e2e2e2;border-radius:2px;"></div>
<svg class="r" style="left:671.40px;top:79.40px;overflow:visible" width="8.4" height="8.4" viewBox="0 0 8.4 8.4"><path d="M1 0.4V7.4H7.6M1 2.6H7.6M3.4 5H7.6M1 5H3.4" stroke="#1a86d8" stroke-width="0.8" fill="none"/></svg>
<svg class="r" style="left:684.80px;top:79.00px;overflow:visible" width="8" height="9.4" viewBox="0 0 8 9.4"><path d="M0.4 0.4H7.6L4.8 3.8V9L3.2 8V3.8Z" stroke="#3a9be0" stroke-width="0.8" fill="#d5ebfa"/></svg>
<svg class="r" style="left:697.20px;top:79.60px;overflow:visible" width="9.2" height="8.4" viewBox="0 0 9.2 8.4"><rect x="0.4" y="0.4" width="7.4" height="7.4" stroke="#d8d8d8" stroke-width="0.8" fill="#f4f4f4"/><path d="M2 3H6M2 5H5" stroke="#dcdcdc" stroke-width="0.6"/></svg>
<svg class="r" style="left:709.60px;top:78.80px;overflow:visible" width="10" height="9.4" viewBox="0 0 10 9.4"><rect x="0.4" y="1.8" width="8" height="7.2" stroke="#1a86d8" stroke-width="0.8" fill="#fff"/><rect x="0.4" y="1.8" width="8" height="1.6" fill="#1a86d8"/><circle cx="7.6" cy="2.2" r="2" fill="#22b14c"/></svg>
<svg class="r" style="left:724.80px;top:79.20px;overflow:visible" width="3.6" height="9" viewBox="0 0 3.6 9"><circle cx="1.8" cy="1.4" r="1.1" stroke="#666" stroke-width="0.6" fill="none"/><circle cx="1.8" cy="4.4" r="1.1" stroke="#666" stroke-width="0.6" fill="none"/><circle cx="1.8" cy="7.4" r="1.1" stroke="#666" stroke-width="0.6" fill="none"/></svg>
<div class="t" style="left:609.10px;top:93.88px;font-size:7.70px;color:#333;font-weight:normal;transform:scaleX(0.9091);transform-origin:0 50%;">Property</div>
<div class="t" style="left:668.40px;top:94.01px;font-size:7.48px;color:#333;font-weight:normal;transform:scaleX(0.9091);transform-origin:0 50%;">Value</div>
<div class="r" style="left:608.20px;top:105.60px;width:126.80px;height:0.70px;background:#e8e8e8;"></div>
<svg class="r" style="left:609.80px;top:110.44px;overflow:visible" width="6" height="4" viewBox="0 0 6 4"><path d="M0.6 0.8L3 3.2L5.4 0.8" stroke="#888" stroke-width="0.9" fill="none"/></svg>
<div class="t" style="left:619.80px;top:107.35px;font-size:8.80px;color:#222;font-weight:normal;transform:scaleX(0.9091);transform-origin:0 50%;">Main</div>
<div class="r" style="left:608.20px;top:116.97px;width:126.80px;height:10.67px;background:#f2f3f3;"></div>
<div class="t" style="left:629.4px;top:118.02px;width:41.80px;overflow:hidden;font-size:8.80px;color:#222;transform:scaleX(0.9091);transform-origin:0 50%;">Table Nam</div>
<div class="t" style="left:669.00px;top:118.02px;font-size:8.80px;color:#222;font-weight:normal;transform:scaleX(0.9091);transform-origin:0 50%;">series</div>
<div class="t" style="left:629.4px;top:128.69px;width:41.80px;overflow:hidden;font-size:8.80px;color:#222;transform:scaleX(0.9091);transform-origin:0 50%;">Engine</div>
<div class="t" style="left:669.00px;top:128.69px;font-size:8.80px;color:#222;font-weight:normal;transform:scaleX(0.9091);transform-origin:0 50%;">InnoDB</div>
<div class="r" style="left:608.20px;top:138.31px;width:126.80px;height:10.67px;background:#f2f3f3;"></div>
<div class="t" style="left:629.4px;top:139.37px;width:41.80px;overflow:hidden;font-size:8.80px;color:#222;transform:scaleX(0.9091);transform-origin:0 50%;">Auto Increr</div>
<div class="t" style="left:669.00px;top:139.37px;font-size:8.80px;color:#222;font-weight:normal;transform:scaleX(0.9091);transform-origin:0 50%;">0</div>
<div class="t" style="left:629.4px;top:150.03px;width:41.80px;overflow:hidden;font-size:8.80px;color:#222;transform:scaleX(0.9091);transform-origin:0 50%;">Charset</div>
<div class="t" style="left:669.00px;top:150.03px;font-size:8.80px;color:#222;font-weight:normal;transform:scaleX(0.9091);transform-origin:0 50%;">latin1</div>
<div class="r" style="left:608.20px;top:159.65px;width:126.80px;height:10.67px;background:#f2f3f3;"></div>
<div class="t" style="left:629.4px;top:160.70px;width:41.80px;overflow:hidden;font-size:8.80px;color:#222;transform:scaleX(0.9091);transform-origin:0 50%;">Collation</div>
<div class="t" style="left:669.00px;top:160.70px;font-size:8.80px;color:#222;font-weight:normal;transform:scaleX(0.9091);transform-origin:0 50%;">latin1_swedish_ci</div>
<div class="t" style="left:629.4px;top:171.37px;width:41.80px;overflow:hidden;font-size:8.80px;color:#222;transform:scaleX(0.9091);transform-origin:0 50%;">Descriptior</div>
<div class="t" style="left:669.00px;top:171.37px;font-size:8.80px;color:#222;font-weight:normal;transform:scaleX(0.9091);transform-origin:0 50%;"></div>
<div class="r" style="left:608.20px;top:180.99px;width:126.80px;height:10.67px;background:#f2f3f3;"></div>
<div class="r" style="left:608.20px;top:202.33px;width:126.80px;height:10.67px;background:#f2f3f3;"></div>
<div class="r" style="left:608.20px;top:223.67px;width:126.80px;height:10.67px;background:#f2f3f3;"></div>
<div class="r" style="left:608.20px;top:245.01px;width:126.80px;height:10.67px;background:#f2f3f3;"></div>
<div class="r" style="left:608.20px;top:266.35px;width:126.80px;height:10.67px;background:#f2f3f3;"></div>
<div class="r" style="left:608.20px;top:287.69px;width:126.80px;height:10.67px;background:#f2f3f3;"></div>
<div class="r" style="left:608.20px;top:309.03px;width:126.80px;height:10.67px;background:#f2f3f3;"></div>
<div class="r" style="left:608.20px;top:330.37px;width:126.80px;height:10.67px;background:#f2f3f3;"></div>
<div class="r" style="left:608.20px;top:351.71px;width:126.80px;height:10.67px;background:#f2f3f3;"></div>
<div class="r" style="left:608.20px;top:373.05px;width:126.80px;height:10.67px;background:#f2f3f3;"></div>
<div class="r" style="left:608.20px;top:394.39px;width:126.80px;height:10.67px;background:#f2f3f3;"></div>
<div class="r" style="left:608.20px;top:415.73px;width:126.80px;height:10.67px;background:#f2f3f3;"></div>
<div class="r" style="left:608.20px;top:437.07px;width:126.80px;height:10.67px;background:#f2f3f3;"></div>
<div class="r" style="left:608.20px;top:458.41px;width:126.80px;height:10.67px;background:#f2f3f3;"></div>
<div class="r" style="left:667.40px;top:91.00px;width:0.70px;height:387.60px;background:#e0e0e0;"></div>
<div class="r" style="left:608.20px;top:478.40px;width:126.80px;height:0.80px;background:#dcdcdc;"></div>
<div class="r" style="left:33.00px;top:479.40px;width:702.00px;height:15.80px;background:#fcfcfc;border-top:0.6px solid #e6e6e6;border-radius:0 0 9px 9px;"></div>
<div class="t" style="left:210.30px;top:482.38px;font-size:8.36px;color:#222;font-weight:normal;transform:scaleX(0.9091);transform-origin:0 50%;">MST</div>
<div class="t" style="left:235.00px;top:482.38px;font-size:8.36px;color:#222;font-weight:normal;transform:scaleX(0.9091);transform-origin:0 50%;">en_VI</div>
<div class="r" style="left:206.30px;top:480.40px;width:0.80px;height:14.60px;background:#e4e4e4;"></div>
<div class="r" style="left:231.70px;top:480.40px;width:0.80px;height:14.60px;background:#e4e4e4;"></div>
<div class="r" style="left:259.80px;top:480.40px;width:0.80px;height:14.60px;background:#e4e4e4;"></div>
<div class="r" style="left:437.30px;top:480.40px;width:0.80px;height:14.60px;background:#e4e4e4;"></div>
<div class="r" style="left:523.80px;top:480.40px;width:0.80px;height:14.60px;background:#e4e4e4;"></div>
<svg class="r" style="left:546.00px;top:484.40px;overflow:visible" width="1" height="7.100000000000023" viewBox="0 0 1 7.100000000000023"><rect x="0" y="0" width="1" height="1" fill="#aaa"/><rect x="0" y="2" width="1" height="1" fill="#aaa"/><rect x="0" y="4" width="1" height="1" fill="#aaa"/></svg>
<svg class="r" style="left:711.00px;top:483.40px;overflow:visible" width="10" height="9" viewBox="0 0 10 9"><rect x="0.5" y="0.5" width="7" height="5" fill="#8fc79a" stroke="#6aa37a" stroke-width="0.6" transform="skewX(-10)"/><rect x="2" y="2" width="6" height="4.4" fill="#b8dfc0" stroke="#6aa37a" stroke-width="0.6"/><circle cx="7.2" cy="6.6" r="2.2" fill="#e4262a"/><path d="M6.2 5.6L8.2 7.6M8.2 5.6L6.2 7.6" stroke="#fff" stroke-width="0.6"/></svg>
<svg class="r" style="left:0;top:0" width="768" height="539" viewBox="0 0 768 539">
<path d="M285.4 195.2L472 165.6" stroke="#1b93d5" stroke-width="1.3" fill="none"/>
<path d="M285.4 218.8L354 256" stroke="#1b93d5" stroke-width="1.3" fill="none"/>
<path d="M280 304.2L354 290" stroke="#1b93d5" stroke-width="1.3" fill="none"/>
<path d="M280 331.2L388 393.4" stroke="#1b93d5" stroke-width="1.3" fill="none"/>
<path d="M451 324.6L487.4 343.4L510 374.2" stroke="#1b93d5" stroke-width="1.1" stroke-dasharray="2.6 1.8" fill="none"/>
<path d="M451.6 326L509 374.8" stroke="#1b93d5" stroke-width="1.1" stroke-dasharray="2.6 1.8" fill="none"/>
<circle cx="285.4" cy="195.2" r="1.9" fill="#000"/>
<circle cx="285.4" cy="218.8" r="1.9" fill="#000"/>
<circle cx="280" cy="304.2" r="1.9" fill="#000"/>
<circle cx="280" cy="331.2" r="1.9" fill="#000"/>
<circle cx="450.2" cy="323.9" r="1.9" fill="#000"/>
<rect x="509.4" y="374.4" width="3.8" height="3.8" fill="#fff" stroke="#1b93d5" stroke-width="0.8" transform="rotate(12 511.3 376.3)"/>
</svg>
<div class="r" style="left:221.00px;top:173.00px;width:61.70px;height:55.00px;background:#fff;border:1.2px solid #1b93d5;"></div>
<div class="r" style="left:222.20px;top:174.20px;width:59.30px;height:12.80px;background:#cbbeb5;"></div>
<div class="r" style="left:222.20px;top:187.00px;width:59.30px;height:0.80px;background:#72bde8;"></div>
<div class="r" style="left:222.20px;top:212.60px;width:59.30px;height:0.80px;background:#72bde8;"></div>
<div class="t" style="left:221.00px;width:61.70px;top:176.22px;font-size:8.80px;color:#2b2b2b;text-align:center;"><span style="display:inline-block;transform:scaleX(0.9091)"><svg width="9.9" height="7" viewBox="0 0 9 7" preserveAspectRatio="none" style="vertical-align:-0.6px;margin-right:2.4px"><rect x="0" y="0" width="9" height="7" rx="1.4" fill="#1a84cf"/><rect x="0.9" y="2.1" width="7.2" height="1.6" fill="#43c3f2"/><rect x="0.9" y="4.4" width="7.2" height="1.7" fill="#a9daf5"/><rect x="4.1" y="2" width="0.8" height="5" fill="#1a84cf"/></svg>film_actor</span></div>
<svg class="r" style="left:223.60px;top:191.20px;overflow:visible" width="10" height="9" viewBox="0 0 10 9"><path d="M0.4 1.2L1.5 0.4V4.6M2.6 1.3Q2.8 0.4 3.7 0.4Q4.7 0.4 4.7 1.4Q4.7 2.1 2.5 4.5H4.9M5.8 0.8Q6.1 0.4 6.9 0.4Q7.9 0.4 7.9 1.4Q7.9 2.3 6.7 2.3Q8.1 2.3 8.1 3.4Q8.1 4.6 6.8 4.6Q6 4.6 5.6 4.1" stroke="#2f97e6" stroke-width="0.95" fill="none" transform="scale(1.08 1.0)"/><rect x="4.6" y="3.2" width="5" height="5" rx="0.5" fill="#1682d6"/><path d="M6 4.4V7.2M8.2 4.4V7.2" stroke="#8fcaf3" stroke-width="0.6"/></svg>
<div class="t" style="left:235.00px;top:190.32px;font-size:8.80px;color:#111;font-weight:bold;transform:scaleX(0.9091);transform-origin:0 50%;">actor_id</div>
<svg class="r" style="left:223.60px;top:202.40px;overflow:visible" width="10" height="9" viewBox="0 0 10 9"><path d="M0.4 1.2L1.5 0.4V4.6M2.6 1.3Q2.8 0.4 3.7 0.4Q4.7 0.4 4.7 1.4Q4.7 2.1 2.5 4.5H4.9M5.8 0.8Q6.1 0.4 6.9 0.4Q7.9 0.4 7.9 1.4Q7.9 2.3 6.7 2.3Q8.1 2.3 8.1 3.4Q8.1 4.6 6.8 4.6Q6 4.6 5.6 4.1" stroke="#2f97e6" stroke-width="0.95" fill="none" transform="scale(1.08 1.0)"/><rect x="4.6" y="3.2" width="5" height="5" rx="0.5" fill="#1682d6"/><path d="M6 4.4V7.2M8.2 4.4V7.2" stroke="#8fcaf3" stroke-width="0.6"/></svg>
<div class="t" style="left:235.00px;top:201.52px;font-size:8.80px;color:#111;font-weight:bold;transform:scaleX(0.9091);transform-origin:0 50%;">film_id</div>
<svg class="r" style="left:223.80px;top:216.00px;overflow:visible" width="9" height="9" viewBox="0 0 9 9"><circle cx="4.1" cy="4.1" r="4.1" fill="#1a86d8"/><path d="M4.3 1.5V4.4L2.3 6.2" stroke="#fff" stroke-width="0.9" fill="none"/></svg>
<div class="t" style="left:235.00px;top:215.42px;font-size:8.80px;color:#222;font-weight:normal;transform:scaleX(0.9091);transform-origin:0 50%;">last_update</div>
<div class="r" style="left:472.00px;top:129.20px;width:62.00px;height:66.20px;background:#fff;border:1.2px solid #1b93d5;"></div>
<div class="r" style="left:473.20px;top:130.40px;width:59.60px;height:12.80px;background:#cbbeb5;"></div>
<div class="r" style="left:473.20px;top:143.20px;width:59.60px;height:0.80px;background:#72bde8;"></div>
<div class="r" style="left:473.20px;top:157.60px;width:59.60px;height:0.80px;background:#72bde8;"></div>
<div class="t" style="left:472.00px;width:62.00px;top:132.42px;font-size:8.80px;color:#2b2b2b;text-align:center;"><span style="display:inline-block;transform:scaleX(0.9091)"><svg width="9.9" height="7" viewBox="0 0 9 7" preserveAspectRatio="none" style="vertical-align:-0.6px;margin-right:2.4px"><rect x="0" y="0" width="9" height="7" rx="1.4" fill="#1a84cf"/><rect x="0.9" y="2.1" width="7.2" height="1.6" fill="#43c3f2"/><rect x="0.9" y="4.4" width="7.2" height="1.7" fill="#a9daf5"/><rect x="4.1" y="2" width="0.8" height="5" fill="#1a84cf"/></svg>actor</span></div>
<svg class="r" style="left:474.60px;top:147.40px;overflow:visible" width="10" height="9" viewBox="0 0 10 9"><path d="M0.4 1.2L1.5 0.4V4.6M2.6 1.3Q2.8 0.4 3.7 0.4Q4.7 0.4 4.7 1.4Q4.7 2.1 2.5 4.5H4.9M5.8 0.8Q6.1 0.4 6.9 0.4Q7.9 0.4 7.9 1.4Q7.9 2.3 6.7 2.3Q8.1 2.3 8.1 3.4Q8.1 4.6 6.8 4.6Q6 4.6 5.6 4.1" stroke="#2f97e6" stroke-width="0.95" fill="none" transform="scale(1.08 1.0)"/><rect x="4.6" y="3.2" width="5" height="5" rx="0.5" fill="#1682d6"/><path d="M6 4.4V7.2M8.2 4.4V7.2" stroke="#8fcaf3" stroke-width="0.6"/></svg>
<div class="t" style="left:486.00px;top:146.52px;font-size:8.80px;color:#111;font-weight:bold;transform:scaleX(0.9091);transform-origin:0 50%;">actor_id</div>
<svg class="r" style="left:474.60px;top:162.80px;overflow:visible" width="10" height="9" viewBox="0 0 10 9"><path d="M0.5 3.4V1.5Q0.5 0.4 1.6 0.4Q2.7 0.4 2.7 1.5V3.4M0.5 2.2H2.7M3.6 0.4V3.4H5.1Q6.1 3.4 6.1 2.6Q6.1 1.8 5 1.8H3.6M3.6 0.4H5Q5.9 0.4 5.9 1.1Q5.9 1.8 5 1.8M9.2 0.7Q8.8 0.4 8.3 0.4Q7 0.4 7 1.9Q7 3.4 8.3 3.4Q8.8 3.4 9.2 3.1" stroke="#1f8ce2" stroke-width="1.1" fill="none"/></svg>
<div class="t" style="left:486.00px;top:160.42px;font-size:8.80px;color:#222;font-weight:normal;transform:scaleX(0.9091);transform-origin:0 50%;">first_name</div>
<svg class="r" style="left:474.60px;top:174.00px;overflow:visible" width="10" height="9" viewBox="0 0 10 9"><path d="M0.5 3.4V1.5Q0.5 0.4 1.6 0.4Q2.7 0.4 2.7 1.5V3.4M0.5 2.2H2.7M3.6 0.4V3.4H5.1Q6.1 3.4 6.1 2.6Q6.1 1.8 5 1.8H3.6M3.6 0.4H5Q5.9 0.4 5.9 1.1Q5.9 1.8 5 1.8M9.2 0.7Q8.8 0.4 8.3 0.4Q7 0.4 7 1.9Q7 3.4 8.3 3.4Q8.8 3.4 9.2 3.1" stroke="#1f8ce2" stroke-width="1.1" fill="none"/><rect x="5.4" y="3.4" width="4" height="4" fill="#4d6f9e"/><path d="M6 4L8.8 6.8M8.8 4L6 6.8" stroke="#c9d9ea" stroke-width="0.6"/></svg>
<div class="t" style="left:486.00px;top:171.62px;font-size:8.80px;color:#222;font-weight:normal;transform:scaleX(0.9091);transform-origin:0 50%;">last_name</div>
<svg class="r" style="left:474.80px;top:183.40px;overflow:visible" width="9" height="9" viewBox="0 0 9 9"><circle cx="4.1" cy="4.1" r="4.1" fill="#1a86d8"/><path d="M4.3 1.5V4.4L2.3 6.2" stroke="#fff" stroke-width="0.9" fill="none"/></svg>
<div class="t" style="left:486.00px;top:182.82px;font-size:8.80px;color:#222;font-weight:normal;transform:scaleX(0.9091);transform-origin:0 50%;">last_update</div>
<div class="r" style="left:354.00px;top:215.50px;width:94.00px;height:133.40px;background:#fff;border:1.2px solid #1b93d5;"></div>
<div class="r" style="left:355.20px;top:216.70px;width:91.60px;height:12.80px;background:#cbbeb5;"></div>
<div class="r" style="left:355.20px;top:229.50px;width:91.60px;height:0.80px;background:#72bde8;"></div>
<div class="r" style="left:355.20px;top:243.90px;width:91.60px;height:0.80px;background:#72bde8;"></div>
<div class="t" style="left:354.00px;width:94.00px;top:218.72px;font-size:8.80px;color:#2b2b2b;text-align:center;"><span style="display:inline-block;transform:scaleX(0.9091)"><svg width="9.9" height="7" viewBox="0 0 9 7" preserveAspectRatio="none" style="vertical-align:-0.6px;margin-right:2.4px"><rect x="0" y="0" width="9" height="7" rx="1.4" fill="#1a84cf"/><rect x="0.9" y="2.1" width="7.2" height="1.6" fill="#43c3f2"/><rect x="0.9" y="4.4" width="7.2" height="1.7" fill="#a9daf5"/><rect x="4.1" y="2" width="0.8" height="5" fill="#1a84cf"/></svg>film</span></div>
<svg class="r" style="left:356.60px;top:233.70px;overflow:visible" width="10" height="9" viewBox="0 0 10 9"><path d="M0.4 1.2L1.5 0.4V4.6M2.6 1.3Q2.8 0.4 3.7 0.4Q4.7 0.4 4.7 1.4Q4.7 2.1 2.5 4.5H4.9M5.8 0.8Q6.1 0.4 6.9 0.4Q7.9 0.4 7.9 1.4Q7.9 2.3 6.7 2.3Q8.1 2.3 8.1 3.4Q8.1 4.6 6.8 4.6Q6 4.6 5.6 4.1" stroke="#2f97e6" stroke-width="0.95" fill="none" transform="scale(1.08 1.0)"/><rect x="4.6" y="3.2" width="5" height="5" rx="0.5" fill="#1682d6"/><path d="M6 4.4V7.2M8.2 4.4V7.2" stroke="#8fcaf3" stroke-width="0.6"/></svg>
<div class="t" style="left:368.00px;top:232.82px;font-size:8.80px;color:#111;font-weight:bold;transform:scaleX(0.9091);transform-origin:0 50%;">film_id</div>
<svg class="r" style="left:356.60px;top:249.10px;overflow:visible" width="10" height="9" viewBox="0 0 10 9"><path d="M0.5 3.4V1.5Q0.5 0.4 1.6 0.4Q2.7 0.4 2.7 1.5V3.4M0.5 2.2H2.7M3.6 0.4V3.4H5.1Q6.1 3.4 6.1 2.6Q6.1 1.8 5 1.8H3.6M3.6 0.4H5Q5.9 0.4 5.9 1.1Q5.9 1.8 5 1.8M9.2 0.7Q8.8 0.4 8.3 0.4Q7 0.4 7 1.9Q7 3.4 8.3 3.4Q8.8 3.4 9.2 3.1" stroke="#1f8ce2" stroke-width="1.1" fill="none"/><rect x="5.4" y="3.4" width="4" height="4" fill="#4d6f9e"/><path d="M6 4L8.8 6.8M8.8 4L6 6.8" stroke="#c9d9ea" stroke-width="0.6"/></svg>
<div class="t" style="left:368.00px;top:246.72px;font-size:8.80px;color:#222;font-weight:normal;transform:scaleX(0.9091);transform-origin:0 50%;">title</div>
<svg class="r" style="left:356.60px;top:260.30px;overflow:visible" width="10" height="9" viewBox="0 0 10 9"><path d="M0.5 3.4V1.5Q0.5 0.4 1.6 0.4Q2.7 0.4 2.7 1.5V3.4M0.5 2.2H2.7M3.6 0.4V3.4H5.1Q6.1 3.4 6.1 2.6Q6.1 1.8 5 1.8H3.6M3.6 0.4H5Q5.9 0.4 5.9 1.1Q5.9 1.8 5 1.8M9.2 0.7Q8.8 0.4 8.3 0.4Q7 0.4 7 1.9Q7 3.4 8.3 3.4Q8.8 3.4 9.2 3.1" stroke="#1f8ce2" stroke-width="1.1" fill="none"/></svg>
<div class="t" style="left:368.00px;top:257.92px;font-size:8.80px;color:#222;font-weight:normal;transform:scaleX(0.9091);transform-origin:0 50%;">description</div>
<svg class="r" style="left:356.80px;top:269.70px;overflow:visible" width="9" height="9" viewBox="0 0 9 9"><circle cx="4.1" cy="4.1" r="4.1" fill="#1a86d8"/><path d="M4.3 1.5V4.4L2.3 6.2" stroke="#fff" stroke-width="0.9" fill="none"/></svg>
<div class="t" style="left:368.00px;top:269.12px;font-size:8.80px;color:#222;font-weight:normal;transform:scaleX(0.9091);transform-origin:0 50%;">release_year</div>
<svg class="r" style="left:356.60px;top:281.40px;overflow:visible" width="10" height="9" viewBox="0 0 10 9"><path d="M0.4 1.2L1.5 0.4V4.6M2.6 1.3Q2.8 0.4 3.7 0.4Q4.7 0.4 4.7 1.4Q4.7 2.1 2.5 4.5H4.9M5.8 0.8Q6.1 0.4 6.9 0.4Q7.9 0.4 7.9 1.4Q7.9 2.3 6.7 2.3Q8.1 2.3 8.1 3.4Q8.1 4.6 6.8 4.6Q6 4.6 5.6 4.1" stroke="#3d9fe8" stroke-width="0.9" fill="none" transform="scale(1.12 1.05)"/><rect x="5.4" y="3.4" width="4" height="4" fill="#4d6f9e"/><path d="M6 4L8.8 6.8M8.8 4L6 6.8" stroke="#c9d9ea" stroke-width="0.6"/></svg>
<div class="t" style="left:368.00px;top:280.32px;font-size:8.80px;color:#222;font-weight:normal;transform:scaleX(0.9091);transform-origin:0 50%;">language_id</div>
<svg class="r" style="left:356.60px;top:292.60px;overflow:visible" width="10" height="9" viewBox="0 0 10 9"><path d="M0.4 1.2L1.5 0.4V4.6M2.6 1.3Q2.8 0.4 3.7 0.4Q4.7 0.4 4.7 1.4Q4.7 2.1 2.5 4.5H4.9M5.8 0.8Q6.1 0.4 6.9 0.4Q7.9 0.4 7.9 1.4Q7.9 2.3 6.7 2.3Q8.1 2.3 8.1 3.4Q8.1 4.6 6.8 4.6Q6 4.6 5.6 4.1" stroke="#3d9fe8" stroke-width="0.9" fill="none" transform="scale(1.12 1.05)"/><rect x="5.4" y="3.4" width="4" height="4" fill="#4d6f9e"/><path d="M6 4L8.8 6.8M8.8 4L6 6.8" stroke="#c9d9ea" stroke-width="0.6"/></svg>
<div class="t" style="left:368.00px;top:291.52px;font-size:8.80px;color:#222;font-weight:normal;transform:scaleX(0.9091);transform-origin:0 50%;">original_language_id</div>
<svg class="r" style="left:356.60px;top:303.80px;overflow:visible" width="10" height="9" viewBox="0 0 10 9"><path d="M0.4 1.2L1.5 0.4V4.6M2.6 1.3Q2.8 0.4 3.7 0.4Q4.7 0.4 4.7 1.4Q4.7 2.1 2.5 4.5H4.9M5.8 0.8Q6.1 0.4 6.9 0.4Q7.9 0.4 7.9 1.4Q7.9 2.3 6.7 2.3Q8.1 2.3 8.1 3.4Q8.1 4.6 6.8 4.6Q6 4.6 5.6 4.1" stroke="#3d9fe8" stroke-width="0.9" fill="none" transform="scale(1.12 1.05)"/></svg>
<div class="t" style="left:368.00px;top:302.72px;font-size:8.80px;color:#222;font-weight:normal;transform:scaleX(0.9091);transform-origin:0 50%;">length</div>
<svg class="r" style="left:356.60px;top:316.30px;overflow:visible" width="10" height="9" viewBox="0 0 10 9"><path d="M0.5 3.4V1.5Q0.5 0.4 1.6 0.4Q2.7 0.4 2.7 1.5V3.4M0.5 2.2H2.7M3.6 0.4V3.4H5.1Q6.1 3.4 6.1 2.6Q6.1 1.8 5 1.8H3.6M3.6 0.4H5Q5.9 0.4 5.9 1.1Q5.9 1.8 5 1.8M9.2 0.7Q8.8 0.4 8.3 0.4Q7 0.4 7 1.9Q7 3.4 8.3 3.4Q8.8 3.4 9.2 3.1" stroke="#1f8ce2" stroke-width="1.1" fill="none"/></svg>
<div class="t" style="left:368.00px;top:313.92px;font-size:8.80px;color:#222;font-weight:normal;transform:scaleX(0.9091);transform-origin:0 50%;">rating</div>
<svg class="r" style="left:356.60px;top:327.50px;overflow:visible" width="10" height="9" viewBox="0 0 10 9"><path d="M0.5 3.4V1.5Q0.5 0.4 1.6 0.4Q2.7 0.4 2.7 1.5V3.4M0.5 2.2H2.7M3.6 0.4V3.4H5.1Q6.1 3.4 6.1 2.6Q6.1 1.8 5 1.8H3.6M3.6 0.4H5Q5.9 0.4 5.9 1.1Q5.9 1.8 5 1.8M9.2 0.7Q8.8 0.4 8.3 0.4Q7 0.4 7 1.9Q7 3.4 8.3 3.4Q8.8 3.4 9.2 3.1" stroke="#1f8ce2" stroke-width="1.1" fill="none"/></svg>
<div class="t" style="left:368.00px;top:325.12px;font-size:8.80px;color:#222;font-weight:normal;transform:scaleX(0.9091);transform-origin:0 50%;">special_features</div>
<svg class="r" style="left:356.80px;top:336.90px;overflow:visible" width="9" height="9" viewBox="0 0 9 9"><circle cx="4.1" cy="4.1" r="4.1" fill="#1a86d8"/><path d="M4.3 1.5V4.4L2.3 6.2" stroke="#fff" stroke-width="0.9" fill="none"/></svg>
<div class="t" style="left:368.00px;top:336.32px;font-size:8.80px;color:#222;font-weight:normal;transform:scaleX(0.9091);transform-origin:0 50%;">last_update</div>
<div class="r" style="left:485.60px;top:218.50px;width:79.90px;height:111.00px;background:#fff;border:2.4px solid #1b93d5;"></div>
<div class="r" style="left:488.00px;top:220.90px;width:75.10px;height:11.60px;background:#cbbeb5;"></div>
<div class="r" style="left:488.00px;top:232.50px;width:75.10px;height:0.80px;background:#72bde8;"></div>
<div class="r" style="left:488.00px;top:246.90px;width:75.10px;height:0.80px;background:#72bde8;"></div>
<div class="t" style="left:485.60px;width:79.90px;top:221.72px;font-size:8.80px;color:#2b2b2b;text-align:center;"><span style="display:inline-block;transform:scaleX(0.9091)"><svg width="9.9" height="7" viewBox="0 0 9 7" preserveAspectRatio="none" style="vertical-align:-0.6px;margin-right:2.4px"><rect x="0" y="0" width="9" height="7" rx="1.4" fill="#1a84cf"/><rect x="0.9" y="2.1" width="7.2" height="1.6" fill="#43c3f2"/><rect x="0.9" y="4.4" width="7.2" height="1.7" fill="#a9daf5"/><rect x="4.1" y="2" width="0.8" height="5" fill="#1a84cf"/></svg>series</span></div>
<svg class="r" style="left:489.40px;top:236.70px;overflow:visible" width="10" height="9" viewBox="0 0 10 9"><path d="M0.4 1.2L1.5 0.4V4.6M2.6 1.3Q2.8 0.4 3.7 0.4Q4.7 0.4 4.7 1.4Q4.7 2.1 2.5 4.5H4.9M5.8 0.8Q6.1 0.4 6.9 0.4Q7.9 0.4 7.9 1.4Q7.9 2.3 6.7 2.3Q8.1 2.3 8.1 3.4Q8.1 4.6 6.8 4.6Q6 4.6 5.6 4.1" stroke="#2f97e6" stroke-width="0.95" fill="none" transform="scale(1.08 1.0)"/><rect x="4.6" y="3.2" width="5" height="5" rx="0.5" fill="#1682d6"/><path d="M6 4.4V7.2M8.2 4.4V7.2" stroke="#8fcaf3" stroke-width="0.6"/></svg>
<div class="t" style="left:500.20px;top:235.82px;font-size:8.80px;color:#111;font-weight:bold;transform:scaleX(0.9091);transform-origin:0 50%;">series_id</div>
<svg class="r" style="left:489.40px;top:252.10px;overflow:visible" width="10" height="9" viewBox="0 0 10 9"><path d="M0.5 3.4V1.5Q0.5 0.4 1.6 0.4Q2.7 0.4 2.7 1.5V3.4M0.5 2.2H2.7M3.6 0.4V3.4H5.1Q6.1 3.4 6.1 2.6Q6.1 1.8 5 1.8H3.6M3.6 0.4H5Q5.9 0.4 5.9 1.1Q5.9 1.8 5 1.8M9.2 0.7Q8.8 0.4 8.3 0.4Q7 0.4 7 1.9Q7 3.4 8.3 3.4Q8.8 3.4 9.2 3.1" stroke="#1f8ce2" stroke-width="1.1" fill="none"/></svg>
<div class="t" style="left:500.20px;top:249.72px;font-size:8.80px;color:#222;font-weight:normal;transform:scaleX(0.9091);transform-origin:0 50%;">title</div>
<svg class="r" style="left:489.40px;top:263.30px;overflow:visible" width="10" height="9" viewBox="0 0 10 9"><path d="M0.5 3.4V1.5Q0.5 0.4 1.6 0.4Q2.7 0.4 2.7 1.5V3.4M0.5 2.2H2.7M3.6 0.4V3.4H5.1Q6.1 3.4 6.1 2.6Q6.1 1.8 5 1.8H3.6M3.6 0.4H5Q5.9 0.4 5.9 1.1Q5.9 1.8 5 1.8M9.2 0.7Q8.8 0.4 8.3 0.4Q7 0.4 7 1.9Q7 3.4 8.3 3.4Q8.8 3.4 9.2 3.1" stroke="#1f8ce2" stroke-width="1.1" fill="none"/></svg>
<div class="t" style="left:500.20px;top:260.92px;font-size:8.80px;color:#222;font-weight:normal;transform:scaleX(0.9091);transform-origin:0 50%;">description</div>
<svg class="r" style="left:489.40px;top:273.20px;overflow:visible" width="10" height="9" viewBox="0 0 10 9"><path d="M0.4 1.2L1.5 0.4V4.6M2.6 1.3Q2.8 0.4 3.7 0.4Q4.7 0.4 4.7 1.4Q4.7 2.1 2.5 4.5H4.9M5.8 0.8Q6.1 0.4 6.9 0.4Q7.9 0.4 7.9 1.4Q7.9 2.3 6.7 2.3Q8.1 2.3 8.1 3.4Q8.1 4.6 6.8 4.6Q6 4.6 5.6 4.1" stroke="#3d9fe8" stroke-width="0.9" fill="none" transform="scale(1.12 1.05)"/></svg>
<div class="t" style="left:500.20px;top:272.12px;font-size:8.80px;color:#222;font-weight:normal;transform:scaleX(0.9091);transform-origin:0 50%;">premiere_year</div>
<svg class="r" style="left:489.40px;top:284.40px;overflow:visible" width="10" height="9" viewBox="0 0 10 9"><path d="M0.4 1.2L1.5 0.4V4.6M2.6 1.3Q2.8 0.4 3.7 0.4Q4.7 0.4 4.7 1.4Q4.7 2.1 2.5 4.5H4.9M5.8 0.8Q6.1 0.4 6.9 0.4Q7.9 0.4 7.9 1.4Q7.9 2.3 6.7 2.3Q8.1 2.3 8.1 3.4Q8.1 4.6 6.8 4.6Q6 4.6 5.6 4.1" stroke="#3d9fe8" stroke-width="0.9" fill="none" transform="scale(1.12 1.05)"/></svg>
<div class="t" style="left:500.20px;top:283.32px;font-size:8.80px;color:#222;font-weight:normal;transform:scaleX(0.9091);transform-origin:0 50%;">finale_year</div>
<svg class="r" style="left:489.40px;top:295.60px;overflow:visible" width="10" height="9" viewBox="0 0 10 9"><path d="M0.4 1.2L1.5 0.4V4.6M2.6 1.3Q2.8 0.4 3.7 0.4Q4.7 0.4 4.7 1.4Q4.7 2.1 2.5 4.5H4.9M5.8 0.8Q6.1 0.4 6.9 0.4Q7.9 0.4 7.9 1.4Q7.9 2.3 6.7 2.3Q8.1 2.3 8.1 3.4Q8.1 4.6 6.8 4.6Q6 4.6 5.6 4.1" stroke="#3d9fe8" stroke-width="0.9" fill="none" transform="scale(1.12 1.05)"/></svg>
<div class="t" style="left:500.20px;top:294.52px;font-size:8.80px;color:#222;font-weight:normal;transform:scaleX(0.9091);transform-origin:0 50%;">episodes</div>
<svg class="r" style="left:489.40px;top:308.10px;overflow:visible" width="10" height="9" viewBox="0 0 10 9"><path d="M0.5 3.4V1.5Q0.5 0.4 1.6 0.4Q2.7 0.4 2.7 1.5V3.4M0.5 2.2H2.7M3.6 0.4V3.4H5.1Q6.1 3.4 6.1 2.6Q6.1 1.8 5 1.8H3.6M3.6 0.4H5Q5.9 0.4 5.9 1.1Q5.9 1.8 5 1.8M9.2 0.7Q8.8 0.4 8.3 0.4Q7 0.4 7 1.9Q7 3.4 8.3 3.4Q8.8 3.4 9.2 3.1" stroke="#1f8ce2" stroke-width="1.1" fill="none"/></svg>
<div class="t" style="left:500.20px;top:305.72px;font-size:8.80px;color:#222;font-weight:normal;transform:scaleX(0.9091);transform-origin:0 50%;">rating</div>
<svg class="r" style="left:489.40px;top:319.30px;overflow:visible" width="10" height="9" viewBox="0 0 10 9"><path d="M0.5 3.4V1.5Q0.5 0.4 1.6 0.4Q2.7 0.4 2.7 1.5V3.4M0.5 2.2H2.7M3.6 0.4V3.4H5.1Q6.1 3.4 6.1 2.6Q6.1 1.8 5 1.8H3.6M3.6 0.4H5Q5.9 0.4 5.9 1.1Q5.9 1.8 5 1.8M9.2 0.7Q8.8 0.4 8.3 0.4Q7 0.4 7 1.9Q7 3.4 8.3 3.4Q8.8 3.4 9.2 3.1" stroke="#1f8ce2" stroke-width="1.1" fill="none"/></svg>
<div class="t" style="left:500.20px;top:316.92px;font-size:8.80px;color:#222;font-weight:normal;transform:scaleX(0.9091);transform-origin:0 50%;">special_features</div>
<div class="r" style="left:484.20px;top:217.10px;width:2.80px;height:2.80px;background:#000;"></div>
<div class="r" style="left:484.20px;top:272.60px;width:2.80px;height:2.80px;background:#000;"></div>
<div class="r" style="left:484.20px;top:328.10px;width:2.80px;height:2.80px;background:#000;"></div>
<div class="r" style="left:524.15px;top:217.10px;width:2.80px;height:2.80px;background:#000;"></div>
<div class="r" style="left:524.15px;top:328.10px;width:2.80px;height:2.80px;background:#000;"></div>
<div class="r" style="left:564.10px;top:217.10px;width:2.80px;height:2.80px;background:#000;"></div>
<div class="r" style="left:564.10px;top:272.60px;width:2.80px;height:2.80px;background:#000;"></div>
<div class="r" style="left:564.10px;top:328.10px;width:2.80px;height:2.80px;background:#000;"></div>
<div class="r" style="left:212.20px;top:283.50px;width:65.50px;height:55.00px;background:#fff;border:1.2px solid #1b93d5;"></div>
<div class="r" style="left:213.40px;top:284.70px;width:63.10px;height:12.80px;background:#cbbeb5;"></div>
<div class="r" style="left:213.40px;top:297.50px;width:63.10px;height:0.80px;background:#72bde8;"></div>
<div class="r" style="left:213.40px;top:323.10px;width:63.10px;height:0.80px;background:#72bde8;"></div>
<div class="t" style="left:212.20px;width:65.50px;top:286.72px;font-size:8.80px;color:#2b2b2b;text-align:center;"><span style="display:inline-block;transform:scaleX(0.9091)"><svg width="9.9" height="7" viewBox="0 0 9 7" preserveAspectRatio="none" style="vertical-align:-0.6px;margin-right:2.4px"><rect x="0" y="0" width="9" height="7" rx="1.4" fill="#1a84cf"/><rect x="0.9" y="2.1" width="7.2" height="1.6" fill="#43c3f2"/><rect x="0.9" y="4.4" width="7.2" height="1.7" fill="#a9daf5"/><rect x="4.1" y="2" width="0.8" height="5" fill="#1a84cf"/></svg>film_category</span></div>
<svg class="r" style="left:214.80px;top:301.70px;overflow:visible" width="10" height="9" viewBox="0 0 10 9"><path d="M0.4 1.2L1.5 0.4V4.6M2.6 1.3Q2.8 0.4 3.7 0.4Q4.7 0.4 4.7 1.4Q4.7 2.1 2.5 4.5H4.9M5.8 0.8Q6.1 0.4 6.9 0.4Q7.9 0.4 7.9 1.4Q7.9 2.3 6.7 2.3Q8.1 2.3 8.1 3.4Q8.1 4.6 6.8 4.6Q6 4.6 5.6 4.1" stroke="#2f97e6" stroke-width="0.95" fill="none" transform="scale(1.08 1.0)"/><rect x="4.6" y="3.2" width="5" height="5" rx="0.5" fill="#1682d6"/><path d="M6 4.4V7.2M8.2 4.4V7.2" stroke="#8fcaf3" stroke-width="0.6"/></svg>
<div class="t" style="left:226.20px;top:300.82px;font-size:8.80px;color:#111;font-weight:bold;transform:scaleX(0.9091);transform-origin:0 50%;">film_id</div>
<svg class="r" style="left:214.80px;top:312.90px;overflow:visible" width="10" height="9" viewBox="0 0 10 9"><path d="M0.4 1.2L1.5 0.4V4.6M2.6 1.3Q2.8 0.4 3.7 0.4Q4.7 0.4 4.7 1.4Q4.7 2.1 2.5 4.5H4.9M5.8 0.8Q6.1 0.4 6.9 0.4Q7.9 0.4 7.9 1.4Q7.9 2.3 6.7 2.3Q8.1 2.3 8.1 3.4Q8.1 4.6 6.8 4.6Q6 4.6 5.6 4.1" stroke="#2f97e6" stroke-width="0.95" fill="none" transform="scale(1.08 1.0)"/><rect x="4.6" y="3.2" width="5" height="5" rx="0.5" fill="#1682d6"/><path d="M6 4.4V7.2M8.2 4.4V7.2" stroke="#8fcaf3" stroke-width="0.6"/></svg>
<div class="t" style="left:226.20px;top:312.02px;font-size:8.80px;color:#111;font-weight:bold;transform:scaleX(0.9091);transform-origin:0 50%;">category_id</div>
<svg class="r" style="left:215.00px;top:326.50px;overflow:visible" width="9" height="9" viewBox="0 0 9 9"><circle cx="4.1" cy="4.1" r="4.1" fill="#1a86d8"/><path d="M4.3 1.5V4.4L2.3 6.2" stroke="#fff" stroke-width="0.9" fill="none"/></svg>
<div class="t" style="left:226.20px;top:325.92px;font-size:8.80px;color:#222;font-weight:normal;transform:scaleX(0.9091);transform-origin:0 50%;">last_update</div>
<div class="r" style="left:264.10px;top:385.10px;width:59.50px;height:55.00px;background:#fff;border:1.2px solid #1b93d5;"></div>
<div class="r" style="left:265.30px;top:386.30px;width:57.10px;height:12.80px;background:#cbbeb5;"></div>
<div class="r" style="left:265.30px;top:399.10px;width:57.10px;height:0.80px;background:#72bde8;"></div>
<div class="r" style="left:265.30px;top:413.50px;width:57.10px;height:0.80px;background:#72bde8;"></div>
<div class="t" style="left:264.10px;width:59.50px;top:388.32px;font-size:8.80px;color:#2b2b2b;text-align:center;"><span style="display:inline-block;transform:scaleX(0.9091)"><svg width="9.9" height="7" viewBox="0 0 9 7" preserveAspectRatio="none" style="vertical-align:-0.6px;margin-right:2.4px"><rect x="0" y="0" width="9" height="7" rx="1.4" fill="#1a84cf"/><rect x="0.9" y="2.1" width="7.2" height="1.6" fill="#43c3f2"/><rect x="0.9" y="4.4" width="7.2" height="1.7" fill="#a9daf5"/><rect x="4.1" y="2" width="0.8" height="5" fill="#1a84cf"/></svg>film_text</span></div>
<svg class="r" style="left:266.70px;top:403.30px;overflow:visible" width="10" height="9" viewBox="0 0 10 9"><path d="M0.4 1.2L1.5 0.4V4.6M2.6 1.3Q2.8 0.4 3.7 0.4Q4.7 0.4 4.7 1.4Q4.7 2.1 2.5 4.5H4.9M5.8 0.8Q6.1 0.4 6.9 0.4Q7.9 0.4 7.9 1.4Q7.9 2.3 6.7 2.3Q8.1 2.3 8.1 3.4Q8.1 4.6 6.8 4.6Q6 4.6 5.6 4.1" stroke="#2f97e6" stroke-width="0.95" fill="none" transform="scale(1.08 1.0)"/><rect x="4.6" y="3.2" width="5" height="5" rx="0.5" fill="#1682d6"/><path d="M6 4.4V7.2M8.2 4.4V7.2" stroke="#8fcaf3" stroke-width="0.6"/></svg>
<div class="t" style="left:278.10px;top:402.42px;font-size:8.80px;color:#111;font-weight:bold;transform:scaleX(0.9091);transform-origin:0 50%;">film_id</div>
<svg class="r" style="left:266.70px;top:418.70px;overflow:visible" width="10" height="9" viewBox="0 0 10 9"><path d="M0.5 3.4V1.5Q0.5 0.4 1.6 0.4Q2.7 0.4 2.7 1.5V3.4M0.5 2.2H2.7M3.6 0.4V3.4H5.1Q6.1 3.4 6.1 2.6Q6.1 1.8 5 1.8H3.6M3.6 0.4H5Q5.9 0.4 5.9 1.1Q5.9 1.8 5 1.8M9.2 0.7Q8.8 0.4 8.3 0.4Q7 0.4 7 1.9Q7 3.4 8.3 3.4Q8.8 3.4 9.2 3.1" stroke="#1f8ce2" stroke-width="1.1" fill="none"/><rect x="5.4" y="3.4" width="4" height="4" fill="#4d6f9e"/><path d="M6 4L8.8 6.8M8.8 4L6 6.8" stroke="#c9d9ea" stroke-width="0.6"/></svg>
<div class="t" style="left:278.10px;top:416.32px;font-size:8.80px;color:#222;font-weight:normal;transform:scaleX(0.9091);transform-origin:0 50%;">title</div>
<svg class="r" style="left:266.70px;top:429.90px;overflow:visible" width="10" height="9" viewBox="0 0 10 9"><path d="M0.5 3.4V1.5Q0.5 0.4 1.6 0.4Q2.7 0.4 2.7 1.5V3.4M0.5 2.2H2.7M3.6 0.4V3.4H5.1Q6.1 3.4 6.1 2.6Q6.1 1.8 5 1.8H3.6M3.6 0.4H5Q5.9 0.4 5.9 1.1Q5.9 1.8 5 1.8M9.2 0.7Q8.8 0.4 8.3 0.4Q7 0.4 7 1.9Q7 3.4 8.3 3.4Q8.8 3.4 9.2 3.1" stroke="#1f8ce2" stroke-width="1.1" fill="none"/></svg>
<div class="t" style="left:278.10px;top:427.52px;font-size:8.80px;color:#222;font-weight:normal;transform:scaleX(0.9091);transform-origin:0 50%;">description</div>
<div class="r" style="left:388.00px;top:385.80px;width:64.90px;height:55.00px;background:#fff;border:1.2px solid #1b93d5;"></div>
<div class="r" style="left:389.20px;top:387.00px;width:62.50px;height:12.80px;background:#cbbeb5;"></div>
<div class="r" style="left:389.20px;top:399.80px;width:62.50px;height:0.80px;background:#72bde8;"></div>
<div class="r" style="left:389.20px;top:414.20px;width:62.50px;height:0.80px;background:#72bde8;"></div>
<div class="t" style="left:388.00px;width:64.90px;top:389.02px;font-size:8.80px;color:#2b2b2b;text-align:center;"><span style="display:inline-block;transform:scaleX(0.9091)"><svg width="9.9" height="7" viewBox="0 0 9 7" preserveAspectRatio="none" style="vertical-align:-0.6px;margin-right:2.4px"><rect x="0" y="0" width="9" height="7" rx="1.4" fill="#1a84cf"/><rect x="0.9" y="2.1" width="7.2" height="1.6" fill="#43c3f2"/><rect x="0.9" y="4.4" width="7.2" height="1.7" fill="#a9daf5"/><rect x="4.1" y="2" width="0.8" height="5" fill="#1a84cf"/></svg>category</span></div>
<svg class="r" style="left:390.60px;top:404.00px;overflow:visible" width="10" height="9" viewBox="0 0 10 9"><path d="M0.4 1.2L1.5 0.4V4.6M2.6 1.3Q2.8 0.4 3.7 0.4Q4.7 0.4 4.7 1.4Q4.7 2.1 2.5 4.5H4.9M5.8 0.8Q6.1 0.4 6.9 0.4Q7.9 0.4 7.9 1.4Q7.9 2.3 6.7 2.3Q8.1 2.3 8.1 3.4Q8.1 4.6 6.8 4.6Q6 4.6 5.6 4.1" stroke="#2f97e6" stroke-width="0.95" fill="none" transform="scale(1.08 1.0)"/><rect x="4.6" y="3.2" width="5" height="5" rx="0.5" fill="#1682d6"/><path d="M6 4.4V7.2M8.2 4.4V7.2" stroke="#8fcaf3" stroke-width="0.6"/></svg>
<div class="t" style="left:402.00px;top:403.12px;font-size:8.80px;color:#111;font-weight:bold;transform:scaleX(0.9091);transform-origin:0 50%;">category_id</div>
<svg class="r" style="left:390.60px;top:419.40px;overflow:visible" width="10" height="9" viewBox="0 0 10 9"><path d="M0.5 3.4V1.5Q0.5 0.4 1.6 0.4Q2.7 0.4 2.7 1.5V3.4M0.5 2.2H2.7M3.6 0.4V3.4H5.1Q6.1 3.4 6.1 2.6Q6.1 1.8 5 1.8H3.6M3.6 0.4H5Q5.9 0.4 5.9 1.1Q5.9 1.8 5 1.8M9.2 0.7Q8.8 0.4 8.3 0.4Q7 0.4 7 1.9Q7 3.4 8.3 3.4Q8.8 3.4 9.2 3.1" stroke="#1f8ce2" stroke-width="1.1" fill="none"/></svg>
<div class="t" style="left:402.00px;top:417.02px;font-size:8.80px;color:#222;font-weight:normal;transform:scaleX(0.9091);transform-origin:0 50%;">name</div>
<svg class="r" style="left:390.80px;top:428.80px;overflow:visible" width="9" height="9" viewBox="0 0 9 9"><circle cx="4.1" cy="4.1" r="4.1" fill="#1a86d8"/><path d="M4.3 1.5V4.4L2.3 6.2" stroke="#fff" stroke-width="0.9" fill="none"/></svg>
<div class="t" style="left:402.00px;top:428.22px;font-size:8.80px;color:#222;font-weight:normal;transform:scaleX(0.9091);transform-origin:0 50%;">last_update</div>
<div class="r" style="left:512.30px;top:379.70px;width:66.30px;height:55.00px;background:#fff;border:1.2px solid #1b93d5;"></div>
<div class="r" style="left:513.50px;top:380.90px;width:63.90px;height:12.80px;background:#cbbeb5;"></div>
<div class="r" style="left:513.50px;top:393.70px;width:63.90px;height:0.80px;background:#72bde8;"></div>
<div class="r" style="left:513.50px;top:408.10px;width:63.90px;height:0.80px;background:#72bde8;"></div>
<div class="t" style="left:512.30px;width:66.30px;top:382.92px;font-size:8.80px;color:#2b2b2b;text-align:center;"><span style="display:inline-block;transform:scaleX(0.9091)"><svg width="9.9" height="7" viewBox="0 0 9 7" preserveAspectRatio="none" style="vertical-align:-0.6px;margin-right:2.4px"><rect x="0" y="0" width="9" height="7" rx="1.4" fill="#1a84cf"/><rect x="0.9" y="2.1" width="7.2" height="1.6" fill="#43c3f2"/><rect x="0.9" y="4.4" width="7.2" height="1.7" fill="#a9daf5"/><rect x="4.1" y="2" width="0.8" height="5" fill="#1a84cf"/></svg>language</span></div>
<svg class="r" style="left:514.90px;top:397.90px;overflow:visible" width="10" height="9" viewBox="0 0 10 9"><path d="M0.4 1.2L1.5 0.4V4.6M2.6 1.3Q2.8 0.4 3.7 0.4Q4.7 0.4 4.7 1.4Q4.7 2.1 2.5 4.5H4.9M5.8 0.8Q6.1 0.4 6.9 0.4Q7.9 0.4 7.9 1.4Q7.9 2.3 6.7 2.3Q8.1 2.3 8.1 3.4Q8.1 4.6 6.8 4.6Q6 4.6 5.6 4.1" stroke="#2f97e6" stroke-width="0.95" fill="none" transform="scale(1.08 1.0)"/><rect x="4.6" y="3.2" width="5" height="5" rx="0.5" fill="#1682d6"/><path d="M6 4.4V7.2M8.2 4.4V7.2" stroke="#8fcaf3" stroke-width="0.6"/></svg>
<div class="t" style="left:526.30px;top:397.02px;font-size:8.80px;color:#111;font-weight:bold;transform:scaleX(0.9091);transform-origin:0 50%;">language_id</div>
<svg class="r" style="left:514.90px;top:413.30px;overflow:visible" width="10" height="9" viewBox="0 0 10 9"><path d="M0.5 3.4V1.5Q0.5 0.4 1.6 0.4Q2.7 0.4 2.7 1.5V3.4M0.5 2.2H2.7M3.6 0.4V3.4H5.1Q6.1 3.4 6.1 2.6Q6.1 1.8 5 1.8H3.6M3.6 0.4H5Q5.9 0.4 5.9 1.1Q5.9 1.8 5 1.8M9.2 0.7Q8.8 0.4 8.3 0.4Q7 0.4 7 1.9Q7 3.4 8.3 3.4Q8.8 3.4 9.2 3.1" stroke="#1f8ce2" stroke-width="1.1" fill="none"/></svg>
<div class="t" style="left:526.30px;top:410.92px;font-size:8.80px;color:#222;font-weight:normal;transform:scaleX(0.9091);transform-origin:0 50%;">name</div>
<svg class="r" style="left:515.10px;top:422.70px;overflow:visible" width="9" height="9" viewBox="0 0 9 9"><circle cx="4.1" cy="4.1" r="4.1" fill="#1a86d8"/><path d="M4.3 1.5V4.4L2.3 6.2" stroke="#fff" stroke-width="0.9" fill="none"/></svg>
<div class="t" style="left:526.30px;top:422.12px;font-size:8.80px;color:#222;font-weight:normal;transform:scaleX(0.9091);transform-origin:0 50%;">last_update</div>
<div class="r" style="left:349.20px;top:451.00px;width:32.80px;height:39.20px;border:3.9px solid #f9a344;"></div>
</body></html>
